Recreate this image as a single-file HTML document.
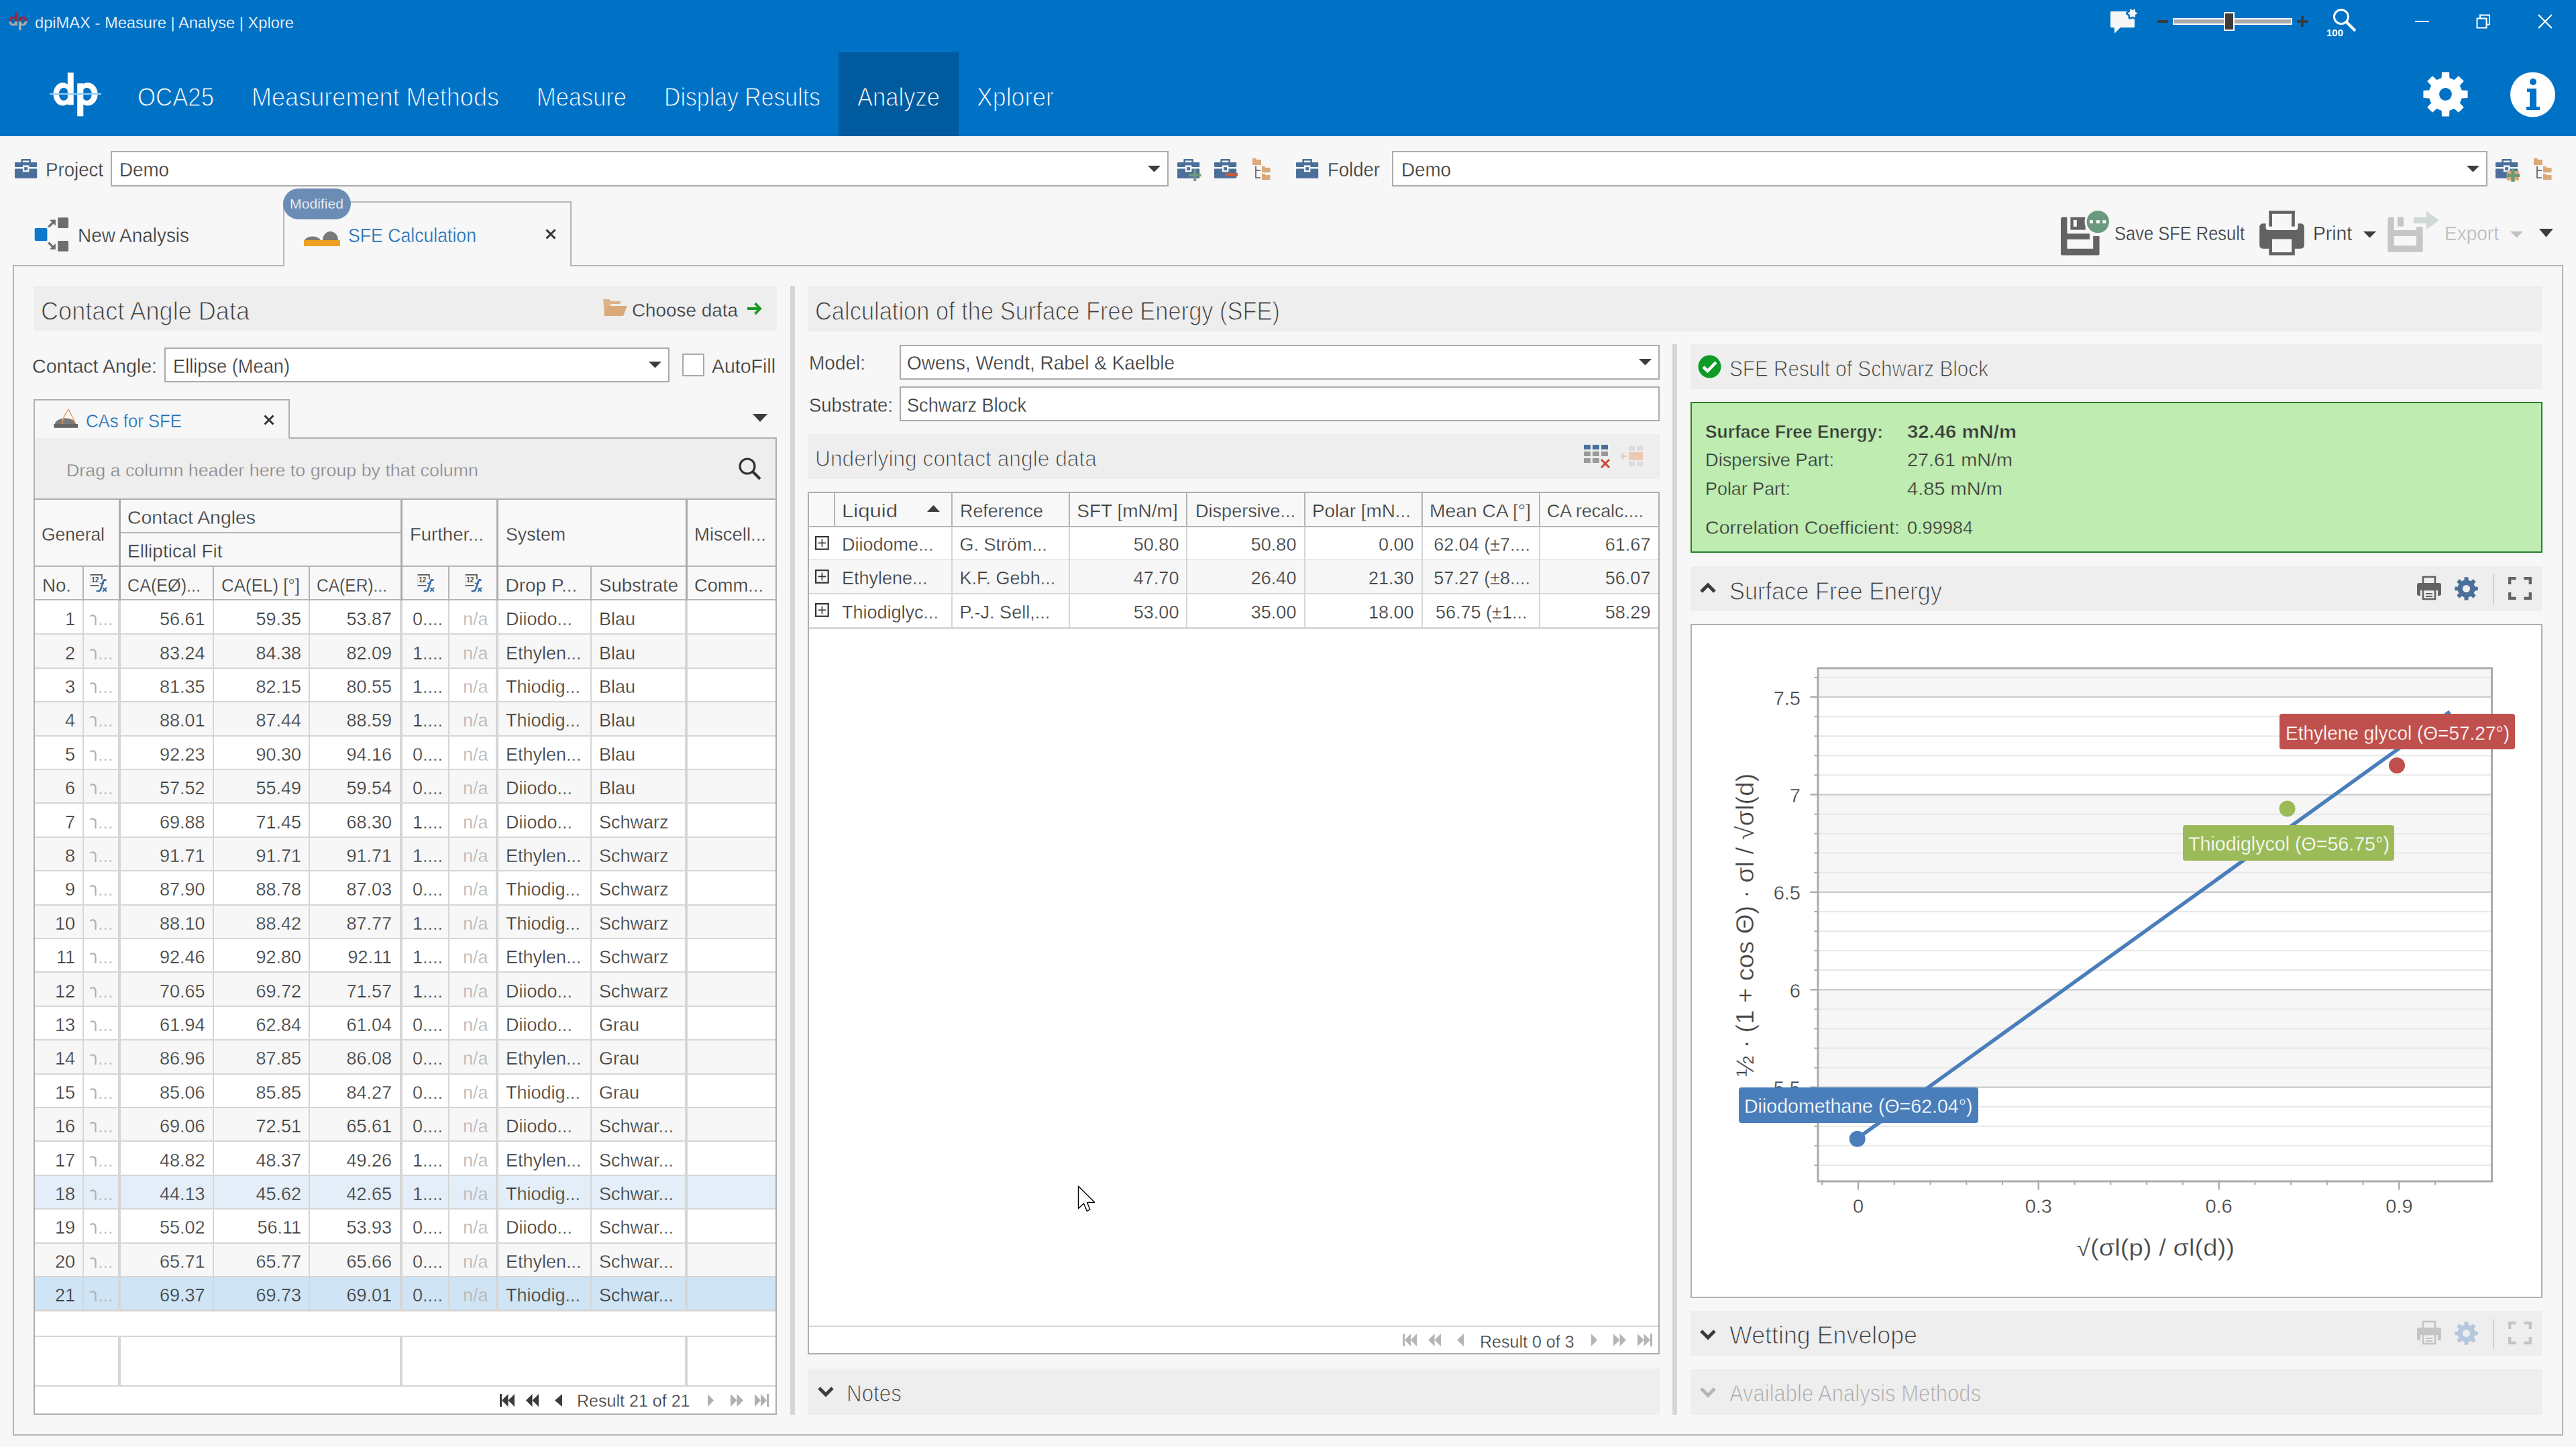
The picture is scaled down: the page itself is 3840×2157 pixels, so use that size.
<!DOCTYPE html><html><head><meta charset="utf-8"><style>
html,body{margin:0;padding:0;}
body{width:3840px;height:2157px;position:relative;overflow:hidden;background:#f7f7f7;font-family:"Liberation Sans", sans-serif;}
.a{position:absolute;display:block;}
.t{position:absolute;white-space:pre;font-family:"Liberation Sans", sans-serif;}
</style></head><body>
<div class="a" style="left:0px;top:0px;width:3840px;height:203px;background:#0072c6;"></div>
<div class="a" style="left:1250px;top:78px;width:179px;height:125px;background:#005a9e;"></div>
<svg class="a" style="left:0px;top:0px;" width="60" height="60" viewBox="0 0 60 60"><defs><clipPath id="lt"><rect x="0" y="0" width="60" height="31.5"/></clipPath><clipPath id="lb"><rect x="0" y="31.5" width="60" height="30"/></clipPath></defs>
      <g clip-path="url(#lt)"><g transform="translate(7.73,15.00) scale(0.41)" fill="#a0233a"><path d="M 13.5 40.35 a 14 17.15 0 1 0 28 0 a 14 17.15 0 1 0 -28 0 z M 21.8 40.35 a 7.2 9.65 0 1 1 14.4 0 a 7.2 9.65 0 1 1 -14.4 0 z" fill-rule="evenodd"/><path d="M 50 40.35 a 14.8 17.15 0 1 0 29.6 0 a 14.8 17.15 0 1 0 -29.6 0 z M 56 40.35 a 7.4 9.65 0 1 1 14.8 0 a 7.4 9.65 0 1 1 -14.8 0 z" fill-rule="evenodd"/><rect x="34.8" y="8.3" width="8.9" height="48.1"/><rect x="49.2" y="24.3" width="9.1" height="49"/></g></g>
      <g clip-path="url(#lb)"><g transform="translate(7.73,15.00) scale(0.41)" fill="#b0aaa8"><path d="M 13.5 40.35 a 14 17.15 0 1 0 28 0 a 14 17.15 0 1 0 -28 0 z M 21.8 40.35 a 7.2 9.65 0 1 1 14.4 0 a 7.2 9.65 0 1 1 -14.4 0 z" fill-rule="evenodd"/><path d="M 50 40.35 a 14.8 17.15 0 1 0 29.6 0 a 14.8 17.15 0 1 0 -29.6 0 z M 56 40.35 a 7.4 9.65 0 1 1 14.8 0 a 7.4 9.65 0 1 1 -14.8 0 z" fill-rule="evenodd"/><rect x="34.8" y="8.3" width="8.9" height="48.1"/><rect x="49.2" y="24.3" width="9.1" height="49"/></g></g>
      <rect x="10" y="30.8" width="28" height="1.2" fill="#333" opacity="0.6"/></svg>
<div class="t" style="top:22.48px;font-size:24px;line-height:24px;color:#ffffff;-webkit-text-stroke:0.3px #0072c6;left:52px;transform:scaleX(0.9864);transform-origin:left 50%;">dpiMAX - Measure | Analyse | Xplore</div>
<svg class="a" style="left:66px;top:100px;" width="94" height="80" viewBox="0 0 94 80"><g fill="#fff"><path d="M 13.5 40.35 a 14 17.15 0 1 0 28 0 a 14 17.15 0 1 0 -28 0 z M 21.8 40.35 a 7.2 9.65 0 1 1 14.4 0 a 7.2 9.65 0 1 1 -14.4 0 z" fill-rule="evenodd"/><path d="M 50 40.35 a 14.8 17.15 0 1 0 29.6 0 a 14.8 17.15 0 1 0 -29.6 0 z M 56 40.35 a 7.4 9.65 0 1 1 14.8 0 a 7.4 9.65 0 1 1 -14.8 0 z" fill-rule="evenodd"/><rect x="34.8" y="8.3" width="8.9" height="48.1"/><rect x="49.2" y="24.3" width="9.1" height="49"/></g>
      <rect x="8" y="39" width="77" height="2.2" fill="#8fd0ff"/></svg>
<div class="t" style="top:125.63px;font-size:38px;line-height:38px;color:#ffffff;-webkit-text-stroke:1.1px #0072c6;left:205px;transform:scaleX(0.9147);transform-origin:left 50%;">OCA25</div>
<div class="t" style="top:125.63px;font-size:38px;line-height:38px;color:#ffffff;-webkit-text-stroke:1.1px #0072c6;left:375px;transform:scaleX(0.9495);transform-origin:left 50%;">Measurement Methods</div>
<div class="t" style="top:125.63px;font-size:38px;line-height:38px;color:#ffffff;-webkit-text-stroke:1.1px #0072c6;left:800px;transform:scaleX(0.9064);transform-origin:left 50%;">Measure</div>
<div class="t" style="top:125.63px;font-size:38px;line-height:38px;color:#ffffff;-webkit-text-stroke:1.1px #0072c6;left:990px;transform:scaleX(0.8897);transform-origin:left 50%;">Display Results</div>
<div class="t" style="top:125.63px;font-size:38px;line-height:38px;color:#ffffff;-webkit-text-stroke:1.1px #005a9e;left:1278px;transform:scaleX(0.9097);transform-origin:left 50%;">Analyze</div>
<div class="t" style="top:125.63px;font-size:38px;line-height:38px;color:#ffffff;-webkit-text-stroke:1.1px #0072c6;left:1456px;transform:scaleX(0.9388);transform-origin:left 50%;">Xplorer</div>
<svg class="a" style="left:3136px;top:6px;" width="60" height="50" viewBox="0 0 60 50">
      <path d="M 11.5 10.9 h 33 a 1.5 1.5 0 0 1 1.5 1.5 v 21 a 1.5 1.5 0 0 1 -1.5 1.5 h -19.6 l -8.7 8.8 l -0.5 -8.8 h -4.2 a 1.5 1.5 0 0 1 -1.5 -1.5 v -21 a 1.5 1.5 0 0 1 1.5 -1.5 z" fill="#f7f7f7"/>
      <polygon points="50.40,13.80 46.88,16.10 46.65,20.30 42.90,18.40 39.15,20.30 38.92,16.10 35.40,13.80 38.92,11.50 39.15,7.30 42.90,9.20 46.65,7.30 46.88,11.50" fill="#0072c6" stroke="#0072c6" stroke-width="5" stroke-linejoin="round"/>
      <polygon points="50.40,13.80 46.88,16.10 46.65,20.30 42.90,18.40 39.15,20.30 38.92,16.10 35.40,13.80 38.92,11.50 39.15,7.30 42.90,9.20 46.65,7.30 46.88,11.50" fill="#f7f7f7"/>
    </svg>
<div class="a" style="left:3216px;top:30px;width:16px;height:4px;background:#3a3a3a;"></div>
<div class="a" style="left:3239px;top:27px;width:178px;height:10px;background:#ffffff;"></div>
<div class="a" style="left:3241px;top:29px;width:174px;height:6px;background:#a9a9a9;"></div>
<div class="a" style="left:3315px;top:18px;width:16px;height:28px;background:#ffffff;"></div>
<div class="a" style="left:3317px;top:20px;width:12px;height:24px;background:#3c3c3c;"></div>
<div class="a" style="left:3424px;top:30px;width:16px;height:4px;background:#3a3a3a;"></div>
<div class="a" style="left:3430px;top:24px;width:4px;height:16px;background:#3a3a3a;"></div>
<svg class="a" style="left:3470px;top:8px;" width="48" height="48" viewBox="0 0 48 48">
      <circle cx="20" cy="17" r="10.5" fill="none" stroke="#fff" stroke-width="3"/>
      <line x1="28" y1="25" x2="41" y2="38" stroke="#fff" stroke-width="4" stroke-linecap="butt"/>
    </svg>
<div class="t" style="top:41.10px;font-size:15px;line-height:15px;color:#fff;font-weight:700;left:3468px;">100</div>
<div class="a" style="left:3600px;top:31px;width:21px;height:2px;background:#fff;"></div>
<svg class="a" style="left:3690px;top:20px;" width="26" height="26" viewBox="0 0 26 26">
      <rect x="2.5" y="7.5" width="14" height="14" fill="none" stroke="#fff" stroke-width="2"/>
      <path d="M 7 7.5 v -5 h 14 v 14 h -4.5" fill="none" stroke="#fff" stroke-width="2"/>
    </svg>
<svg class="a" style="left:3782px;top:20px;" width="24" height="24" viewBox="0 0 24 24"><path d="M 2 2 L 22 22 M 22 2 L 2 22" stroke="#fff" stroke-width="2.2"/></svg>
<svg class="a" style="left:3612px;top:107px;" width="67" height="67" viewBox="0 0 67 67"><path d="M 27.52 9.44 L 28.00 0.45 L 39.00 0.45 L 39.48 9.44 L 46.29 12.26 L 52.98 6.24 L 60.76 14.02 L 54.74 20.71 L 57.56 27.52 L 66.55 28.00 L 66.55 39.00 L 57.56 39.48 L 54.74 46.29 L 60.76 52.98 L 52.98 60.76 L 46.29 54.74 L 39.48 57.56 L 39.00 66.55 L 28.00 66.55 L 27.52 57.56 L 20.71 54.74 L 14.02 60.76 L 6.24 52.98 L 12.26 46.29 L 9.44 39.48 L 0.45 39.00 L 0.45 28.00 L 9.44 27.52 L 12.26 20.71 L 6.24 14.02 L 14.02 6.24 L 20.71 12.26 Z" fill="#fff"/><circle cx="33.5" cy="33.5" r="24.77" fill="#fff"/><circle cx="33.5" cy="33.5" r="9.38" fill="#0072c6"/></svg>
<svg class="a" style="left:3742px;top:107px;" width="67" height="68" viewBox="0 0 67 68">
      <circle cx="33.5" cy="34" r="33.5" fill="#fff"/>
      <circle cx="34" cy="15" r="5" fill="#0072c6"/>
      <path d="M 25 25 h 14 v 27 h 5 v 5 h -20 v -5 h 5 v -22 h -4 z" fill="#0072c6"/>
    </svg>
<svg class="a" style="left:21.8px;top:236.8px;" width="37.2" height="32.8" viewBox="0 0 37.2 32.8"><g transform="scale(1.0000,1.0000)">
      <path d="M 9.4 0.8 a 0.8 0.8 0 0 1 0.8 -0.8 h 12.9 a 0.8 0.8 0 0 1 0.8 0.8 v 4.3 h -2.5 v -2.5 h -9.5 v 2.5 h -2.5 z" fill="#4b6f9a"/>
      <rect x="0" y="5.1" width="33.2" height="6.8" rx="0.8" fill="#4b6f9a"/>
      <rect x="0" y="14.6" width="33.2" height="14.2" rx="1.2" fill="#4b6f9a"/>
      <rect x="11.9" y="9.4" width="9.5" height="9.8" fill="#f7f7f7"/>
      <rect x="14.2" y="12.2" width="4.9" height="4.7" fill="#4b6f9a"/>
    </g></svg>
<div class="t" style="top:239.25px;font-size:29px;line-height:29px;color:#3a3a3a;-webkit-text-stroke:0.35px #f7f7f7;left:68px;transform:scaleX(0.9527);transform-origin:left 50%;">Project</div>
<div class="a" style="left:165px;top:225px;width:1577px;height:53px;background:#ffffff;border:2px solid #ababab;box-sizing:border-box;"></div>
<svg class="a" style="left:1711.0px;top:246.5px;" width="19" height="10" viewBox="0 0 19 10"><polygon points="0,0 19,0 9.5,9.5" fill="#3c3c3c"/></svg>
<div class="t" style="top:239.25px;font-size:29px;line-height:29px;color:#3a3a3a;-webkit-text-stroke:0.35px #ffffff;left:178px;transform:scaleX(0.9566);transform-origin:left 50%;">Demo</div>
<svg class="a" style="left:1754.6px;top:237px;" width="37.2" height="32.8" viewBox="0 0 37.2 32.8"><g transform="scale(1.0000,1.0000)">
      <path d="M 9.4 0.8 a 0.8 0.8 0 0 1 0.8 -0.8 h 12.9 a 0.8 0.8 0 0 1 0.8 0.8 v 4.3 h -2.5 v -2.5 h -9.5 v 2.5 h -2.5 z" fill="#4b6f9a"/>
      <rect x="0" y="5.1" width="33.2" height="6.8" rx="0.8" fill="#4b6f9a"/>
      <rect x="0" y="14.6" width="33.2" height="14.2" rx="1.2" fill="#4b6f9a"/>
      <rect x="11.9" y="9.4" width="9.5" height="9.8" fill="#f7f7f7"/>
      <rect x="14.2" y="12.2" width="4.9" height="4.7" fill="#4b6f9a"/>
    </g></svg>
<svg class="a" style="left:1771.5px;top:252px;" width="20" height="19" viewBox="0 0 20 19"><rect x="7.3" y="0" width="4" height="18" fill="#6f9a7c"/><rect x="0" y="7" width="18.5" height="4" fill="#6f9a7c"/></svg>
<svg class="a" style="left:1809.6px;top:237px;" width="37.2" height="32.8" viewBox="0 0 37.2 32.8"><g transform="scale(1.0000,1.0000)">
      <path d="M 9.4 0.8 a 0.8 0.8 0 0 1 0.8 -0.8 h 12.9 a 0.8 0.8 0 0 1 0.8 0.8 v 4.3 h -2.5 v -2.5 h -9.5 v 2.5 h -2.5 z" fill="#4b6f9a"/>
      <rect x="0" y="5.1" width="33.2" height="6.8" rx="0.8" fill="#4b6f9a"/>
      <rect x="0" y="14.6" width="33.2" height="14.2" rx="1.2" fill="#4b6f9a"/>
      <rect x="11.9" y="9.4" width="9.5" height="9.8" fill="#f7f7f7"/>
      <rect x="14.2" y="12.2" width="4.9" height="4.7" fill="#4b6f9a"/>
    </g></svg>
<svg class="a" style="left:1826px;top:257px;" width="22" height="8" viewBox="0 0 22 8"><rect x="0" y="1" width="19" height="4.7" fill="#c25a3f"/></svg>
<svg class="a" style="left:1866px;top:234px;" width="32" height="36" viewBox="0 0 32 36">
      <path d="M 1 2 h 5 l 1.5 2 h 6.5 v 8 h -13 z" fill="#dba878"/>
      <path d="M 15 14 h 4 l 1.5 2 h 7 v 7 h -12.5 z" fill="#dba878"/>
      <path d="M 15 25 h 4 l 1.5 2 h 7 v 7 h -12.5 z" fill="#dba878"/>
      <path d="M 6 13.5 v 17.5 h 7" fill="none" stroke="#555" stroke-width="1.6"/>
      <path d="M 6 20 h 7" fill="none" stroke="#555" stroke-width="1.6"/>
    </svg>
<svg class="a" style="left:1932.3px;top:237px;" width="37.2" height="32.8" viewBox="0 0 37.2 32.8"><g transform="scale(1.0000,1.0000)">
      <path d="M 9.4 0.8 a 0.8 0.8 0 0 1 0.8 -0.8 h 12.9 a 0.8 0.8 0 0 1 0.8 0.8 v 4.3 h -2.5 v -2.5 h -9.5 v 2.5 h -2.5 z" fill="#4b6f9a"/>
      <rect x="0" y="5.1" width="33.2" height="6.8" rx="0.8" fill="#4b6f9a"/>
      <rect x="0" y="14.6" width="33.2" height="14.2" rx="1.2" fill="#4b6f9a"/>
      <rect x="11.9" y="9.4" width="9.5" height="9.8" fill="#f7f7f7"/>
      <rect x="14.2" y="12.2" width="4.9" height="4.7" fill="#4b6f9a"/>
    </g></svg>
<div class="t" style="top:239.25px;font-size:29px;line-height:29px;color:#3a3a3a;-webkit-text-stroke:0.35px #f7f7f7;left:1979px;transform:scaleX(0.9489);transform-origin:left 50%;">Folder</div>
<div class="a" style="left:2075px;top:225px;width:1633px;height:53px;background:#ffffff;border:2px solid #ababab;box-sizing:border-box;"></div>
<svg class="a" style="left:3677.0px;top:246.5px;" width="19" height="10" viewBox="0 0 19 10"><polygon points="0,0 19,0 9.5,9.5" fill="#3c3c3c"/></svg>
<div class="t" style="top:239.25px;font-size:29px;line-height:29px;color:#3a3a3a;-webkit-text-stroke:0.35px #ffffff;left:2089px;transform:scaleX(0.9566);transform-origin:left 50%;">Demo</div>
<svg class="a" style="left:3720.3px;top:237px;" width="37.2" height="32.8" viewBox="0 0 37.2 32.8"><g transform="scale(1.0000,1.0000)">
      <path d="M 9.4 0.8 a 0.8 0.8 0 0 1 0.8 -0.8 h 12.9 a 0.8 0.8 0 0 1 0.8 0.8 v 4.3 h -2.5 v -2.5 h -9.5 v 2.5 h -2.5 z" fill="#4b6f9a"/>
      <rect x="0" y="5.1" width="33.2" height="6.8" rx="0.8" fill="#4b6f9a"/>
      <rect x="0" y="14.6" width="33.2" height="14.2" rx="1.2" fill="#4b6f9a"/>
      <rect x="11.9" y="9.4" width="9.5" height="9.8" fill="#f7f7f7"/>
      <rect x="14.2" y="12.2" width="4.9" height="4.7" fill="#4b6f9a"/>
    </g></svg>
<svg class="a" style="left:3736px;top:252px;" width="22" height="20" viewBox="0 0 22 20"><rect x="1" y="3" width="18" height="14" fill="#dba878"/><rect x="7.5" y="0" width="5" height="19" fill="#6d9a73"/><rect x="0" y="7" width="20" height="5" fill="#6d9a73"/></svg>
<svg class="a" style="left:3776px;top:234px;" width="32" height="36" viewBox="0 0 32 36">
      <path d="M 1 2 h 5 l 1.5 2 h 6.5 v 8 h -13 z" fill="#dba878"/>
      <path d="M 15 14 h 4 l 1.5 2 h 7 v 7 h -12.5 z" fill="#dba878"/>
      <path d="M 15 25 h 4 l 1.5 2 h 7 v 7 h -12.5 z" fill="#dba878"/>
      <path d="M 6 13.5 v 17.5 h 7" fill="none" stroke="#555" stroke-width="1.6"/>
      <path d="M 6 20 h 7" fill="none" stroke="#555" stroke-width="1.6"/>
    </svg>
<div class="a" style="left:19px;top:395px;width:3802px;height:1745px;border:2px solid #b5b5b5;box-sizing:border-box;"></div>
<div class="a" style="left:422px;top:300px;width:430px;height:97px;background:#f7f7f7;"></div>
<div class="a" style="left:422px;top:300px;width:2px;height:97px;background:#b5b5b5;"></div>
<div class="a" style="left:850px;top:300px;width:2px;height:97px;background:#b5b5b5;"></div>
<div class="a" style="left:422px;top:300px;width:430px;height:2px;background:#b5b5b5;"></div>
<div class="a" style="left:422px;top:281px;width:101px;height:46px;border-radius:23px;background:#6b8db5;"></div>
<div class="t" style="top:293.87px;font-size:20px;line-height:20px;color:#ffffff;-webkit-text-stroke:0.3px #6b8db5;left:472px;transform:translateX(-50%) scaleX(1.0581);transform-origin:center 50%;">Modified</div>
<svg class="a" style="left:44px;top:315px;" width="64" height="64" viewBox="0 0 64 64">
      <rect x="7.7" y="24.9" width="18.7" height="19.1" rx="1.5" fill="#0c78cf"/>
      <rect x="42.1" y="9.2" width="15.9" height="15.7" rx="1.5" fill="#6e6e6e"/>
      <rect x="42.1" y="44" width="15.9" height="15.7" rx="1.5" fill="#6e6e6e"/>
      <path d="M 28.3 23.4 L 36 15.7" stroke="#6e6e6e" stroke-width="3.4"/><polygon points="29.8,12.7 38.9,12.6 38.9,21.5" fill="#6e6e6e"/>
      <path d="M 28.3 46.6 L 36 54.3" stroke="#6e6e6e" stroke-width="3.4"/><polygon points="29.8,56.7 38.9,56.8 38.9,47.9" fill="#6e6e6e"/>
    </svg>
<div class="t" style="top:337.25px;font-size:29px;line-height:29px;color:#3a3a3a;-webkit-text-stroke:0.35px #f7f7f7;left:116px;transform:scaleX(0.9625);transform-origin:left 50%;">New Analysis</div>
<svg class="a" style="left:452px;top:340px;" width="58" height="30" viewBox="0 0 58 30">
      <path d="M 2 18 a 13 9 0 0 1 24 0 z" fill="#7a7a7a"/>
      <path d="M 29 18 a 11.5 13 0 0 1 23 0 z" fill="#7a7a7a"/>
      <rect x="1" y="18" width="54" height="9" fill="#f0a020"/>
    </svg>
<div class="t" style="top:337.25px;font-size:29px;line-height:29px;color:#1f6fb5;-webkit-text-stroke:0.35px #f7f7f7;left:519px;transform:scaleX(0.9185);transform-origin:left 50%;">SFE Calculation</div>
<svg class="a" style="left:813px;top:341px;" width="16" height="16" viewBox="0 0 16 16"><path d="M 1.5 1.5 L 14.5 14.5 M 14.5 1.5 L 1.5 14.5" stroke="#333" stroke-width="3"/></svg>
<svg class="a" style="left:3060px;top:305px;" width="90" height="80" viewBox="0 0 90 80">
      <g fill="#636363">
      <path d="M 12 21.3 a 2.5 2.5 0 0 1 2.5 -2.5 h 6.9 v 24.4 h 33.6 v 8.5 h -33.6 v 14.1 h 38.8 v -18.8 h 9.4 v 26 a 2.5 2.5 0 0 1 -2.5 2.5 h -52.6 a 2.5 2.5 0 0 1 -2.5 -2.5 z"/>
      <rect x="26.4" y="18.8" width="22.4" height="18.8"/>
      </g>
      <rect x="30.8" y="22.9" width="5" height="10" fill="#f7f7f7"/>
      <circle cx="67.3" cy="25.6" r="19.8" fill="#f7f7f7"/>
      <circle cx="67.3" cy="25.6" r="16.7" fill="#6a9a7e"/>
      <rect x="55" y="23.2" width="5" height="4.7" fill="#fff"/><rect x="65" y="23.2" width="5" height="4.7" fill="#fff"/><rect x="74.3" y="23.2" width="5" height="4.7" fill="#fff"/>
    </svg>
<div class="t" style="top:334.25px;font-size:29px;line-height:29px;color:#3a3a3a;-webkit-text-stroke:0.35px #f7f7f7;left:3152px;transform:scaleX(0.8785);transform-origin:left 50%;">Save SFE Result</div>
<svg class="a" style="left:3360px;top:305px;" width="80" height="80" viewBox="0 0 80 80">
      <g fill="#636363">
      <rect x="22.3" y="9.1" width="4.7" height="23.5"/><rect x="22.3" y="9.1" width="38.5" height="4.7"/><rect x="56.1" y="9.1" width="4.7" height="23.5"/>
      <path d="M 13.2 28.2 H 17.6 V 33.9 A 4 4 0 0 0 21.6 37.9 H 61.5 A 4 4 0 0 0 65.5 33.9 V 28.2 H 69.9 A 5 5 0 0 1 74.9 33.2 V 60.8 A 5 5 0 0 1 69.9 65.8 H 13.2 A 5 5 0 0 1 8.2 60.8 V 33.2 A 5 5 0 0 1 13.2 28.2 Z"/>
      <rect x="22.3" y="51.1" width="38.5" height="24.4"/>
      </g>
      <rect x="27" y="51.4" width="29.1" height="19.7" fill="#f7f7f7"/>
    </svg>
<div class="t" style="top:334.25px;font-size:29px;line-height:29px;color:#3a3a3a;-webkit-text-stroke:0.35px #f7f7f7;left:3448px;transform:scaleX(0.9725);transform-origin:left 50%;">Print</div>
<svg class="a" style="left:3523px;top:345px;" width="19" height="10" viewBox="0 0 19 10"><polygon points="0,0 19,0 9.5,9.5" fill="#3c3c3c"/></svg>
<svg class="a" style="left:3550px;top:305px;" width="90" height="80" viewBox="0 0 90 80">
      <g fill="#c6c6c6">
      <path d="M 9.4 21.3 a 2.5 2.5 0 0 1 2.5 -2.5 h 6.9 v 19.1 h 33.2 v -4.7 h 9.7 v 35.1 a 2.5 2.5 0 0 1 -2.5 2.5 h -47.3 a 2.5 2.5 0 0 1 -2.5 -2.5 z M 18.8 47 v 14.1 h 33.2 v -14.1 z" fill-rule="evenodd"/>
      <rect x="23.8" y="18.8" width="9.1" height="13.8"/>
      </g>
      <path d="M 47.9 19.1 h 19.1 v -9.7 l 18.8 13.8 l -18.8 14.1 v -9.4 h -19.1 z" fill="#cdd9d2"/>
    </svg>
<div class="t" style="top:334.25px;font-size:29px;line-height:29px;color:#b9b9b9;-webkit-text-stroke:0.35px #f7f7f7;left:3644px;transform:scaleX(0.9663);transform-origin:left 50%;">Export</div>
<svg class="a" style="left:3742px;top:345px;" width="19" height="10" viewBox="0 0 19 10"><polygon points="0,0 19,0 9.5,9.5" fill="#c2c2c2"/></svg>
<svg class="a" style="left:3785px;top:341px;" width="21" height="13" viewBox="0 0 21 13"><polygon points="0,0 21,0 10.5,12.5" fill="#3c3c3c"/></svg>
<div class="a" style="left:50px;top:426px;width:1108px;height:67px;background:#eeeeee;"></div>
<div class="t" style="top:445.23px;font-size:38px;line-height:38px;color:#3c3c3c;-webkit-text-stroke:1.1px #eeeeee;left:61px;transform:scaleX(0.9498);transform-origin:left 50%;">Contact Angle Data</div>
<svg class="a" style="left:897px;top:444px;" width="40" height="30" viewBox="0 0 40 30">
      <path d="M 2 2 h 9 l 3 3 h 14 v 4 h -14 l -10 17 z" fill="#dba878" opacity="0.85"/>
      <path d="M 9 12 h 29 l -6 15 h -29 z" fill="#dba878"/>
    </svg>
<div class="t" style="top:448.60px;font-size:28px;line-height:28px;color:#3a3a3a;-webkit-text-stroke:0.35px #eeeeee;left:942px;transform:scaleX(0.9950);transform-origin:left 50%;">Choose data</div>
<svg class="a" style="left:1112px;top:449px;" width="26" height="22" viewBox="0 0 26 22"><path d="M 2 11 h 19 M 13.5 3.2 l 7.6 7.8 l -7.6 7.8" fill="none" stroke="#179a25" stroke-width="3.8"/></svg>
<div class="a" style="left:1178px;top:426px;width:7px;height:1683px;background:#d6d6d6;"></div>
<div class="t" style="top:532.25px;font-size:29px;line-height:29px;color:#3a3a3a;-webkit-text-stroke:0.35px #f7f7f7;left:48px;transform:scaleX(0.9860);transform-origin:left 50%;">Contact Angle:</div>
<div class="a" style="left:245px;top:518px;width:753px;height:52px;background:#ffffff;border:2px solid #ababab;box-sizing:border-box;"></div>
<svg class="a" style="left:967.0px;top:539.0px;" width="19" height="10" viewBox="0 0 19 10"><polygon points="0,0 19,0 9.5,9.5" fill="#3c3c3c"/></svg>
<div class="t" style="top:532.25px;font-size:29px;line-height:29px;color:#3a3a3a;-webkit-text-stroke:0.35px #ffffff;left:258px;transform:scaleX(0.9388);transform-origin:left 50%;">Ellipse (Mean)</div>
<div class="a" style="left:1017px;top:527px;width:33px;height:34px;background:#fff;border:2px solid #a9a9a9;box-sizing:border-box;"></div>
<div class="t" style="top:532.25px;font-size:29px;line-height:29px;color:#3a3a3a;-webkit-text-stroke:0.35px #f7f7f7;left:1061px;transform:scaleX(0.9824);transform-origin:left 50%;">AutoFill</div>
<div class="a" style="left:50px;top:595px;width:382px;height:60px;background:#f7f7f7;border:2px solid #b0b0b0;box-sizing:border-box;border-bottom:none;"></div>
<div class="a" style="left:432px;top:653px;width:726px;height:2px;background:#b0b0b0;"></div>
<svg class="a" style="left:80px;top:607px;" width="38" height="33" viewBox="0 0 38 33">
      <path d="M 1.8 25.5 A 15.7 9.3 0 0 1 33.2 25.5 Z" fill="#7a7a7a"/>
      <rect x="0.3" y="25" width="35.7" height="5.8" fill="#666"/>
      <path d="M 12.8 25 Q 13 15 22.3 3.3 L 33 25" fill="none" stroke="#e5a060" stroke-width="1.4"/>
    </svg>
<div class="t" style="top:613.50px;font-size:28px;line-height:28px;color:#1f6fb5;-webkit-text-stroke:0.35px #f7f7f7;left:128px;transform:scaleX(0.9191);transform-origin:left 50%;">CAs for SFE</div>
<svg class="a" style="left:393px;top:618px;" width="16" height="16" viewBox="0 0 16 16"><path d="M 1.5 1.5 L 14.5 14.5 M 14.5 1.5 L 1.5 14.5" stroke="#333" stroke-width="3"/></svg>
<svg class="a" style="left:1122px;top:617px;" width="22" height="12" viewBox="0 0 22 12"><polygon points="0,0 22,0 11,12" fill="#3c3c3c"/></svg>
<div class="a" style="left:50px;top:653px;width:1108px;height:1456px;background:#ffffff;border:2px solid #adadad;box-sizing:border-box;"></div>
<div class="a" style="left:52px;top:653px;width:1104px;height:91px;background:#eeeeee;"></div>
<div class="a" style="left:431px;top:652px;width:727px;height:2px;background:#b0b0b0;"></div>
<div class="t" style="top:688.64px;font-size:25px;line-height:25px;color:#888;-webkit-text-stroke:0.35px #eeeeee;left:98.6px;transform:scaleX(1.0724);transform-origin:left 50%;">Drag a column header here to group by that column</div>
<svg class="a" style="left:1100px;top:681px;" width="36" height="36" viewBox="0 0 36 36"><circle cx="14" cy="14" r="11" fill="none" stroke="#333" stroke-width="3.2"/><line x1="22" y1="22" x2="33" y2="33" stroke="#333" stroke-width="4.2"/></svg>
<div class="a" style="left:52px;top:744px;width:1104px;height:151px;background:#f8f8f8;"></div>
<div class="a" style="left:50px;top:743px;width:1108px;height:2px;background:#adadad;"></div>
<div class="a" style="left:50px;top:843px;width:1108px;height:2px;background:#b4b4b4;"></div>
<div class="a" style="left:50px;top:893px;width:1108px;height:3px;background:#b4b4b4;"></div>
<div class="a" style="left:177px;top:793px;width:420px;height:2px;background:#b4b4b4;"></div>
<div class="a" style="left:177px;top:744px;width:3px;height:151px;background:#ababab;"></div>
<div class="a" style="left:597px;top:744px;width:3px;height:151px;background:#ababab;"></div>
<div class="a" style="left:740px;top:744px;width:3px;height:151px;background:#ababab;"></div>
<div class="a" style="left:1022px;top:744px;width:3px;height:151px;background:#ababab;"></div>
<div class="a" style="left:123px;top:843px;width:2px;height:52px;background:#b4b4b4;"></div>
<div class="a" style="left:317px;top:843px;width:2px;height:52px;background:#b4b4b4;"></div>
<div class="a" style="left:460px;top:843px;width:2px;height:52px;background:#b4b4b4;"></div>
<div class="a" style="left:668px;top:843px;width:2px;height:52px;background:#b4b4b4;"></div>
<div class="a" style="left:880px;top:843px;width:2px;height:52px;background:#b4b4b4;"></div>
<div class="t" style="top:782.70px;font-size:28px;line-height:28px;color:#3a3a3a;-webkit-text-stroke:0.35px #f8f8f8;left:62px;transform:scaleX(0.9435);transform-origin:left 50%;">General</div>
<div class="t" style="top:758.10px;font-size:28px;line-height:28px;color:#3a3a3a;-webkit-text-stroke:0.35px #f8f8f8;left:190px;transform:scaleX(1.0141);transform-origin:left 50%;">Contact Angles</div>
<div class="t" style="top:807.60px;font-size:28px;line-height:28px;color:#3a3a3a;-webkit-text-stroke:0.35px #f8f8f8;left:190px;">Elliptical Fit</div>
<div class="t" style="top:782.70px;font-size:28px;line-height:28px;color:#3a3a3a;-webkit-text-stroke:0.35px #f8f8f8;left:611px;transform:scaleX(0.9817);transform-origin:left 50%;">Further...</div>
<div class="t" style="top:782.70px;font-size:28px;line-height:28px;color:#3a3a3a;-webkit-text-stroke:0.35px #f8f8f8;left:753.5px;transform:scaleX(0.9533);transform-origin:left 50%;">System</div>
<div class="t" style="top:782.70px;font-size:28px;line-height:28px;color:#3a3a3a;-webkit-text-stroke:0.35px #f8f8f8;left:1035px;transform:scaleX(0.9825);transform-origin:left 50%;">Miscell...</div>
<div class="t" style="top:858.90px;font-size:28px;line-height:28px;color:#3a3a3a;-webkit-text-stroke:0.35px #f8f8f8;left:62.8px;transform:scaleX(0.9867);transform-origin:left 50%;">No.</div>
<svg class="a" style="left:125px;top:848px;" width="40" height="40" viewBox="0 0 40 40">
      <path d="M 9.6 9.4 v 15" fill="none" stroke="#dcdcdc" stroke-width="1.2"/>
      <path d="M 9.6 8.8 h 17.3 v 6.6" fill="none" stroke="#555" stroke-width="1.7"/>
      <path d="M 9.6 24.8 h 13" fill="none" stroke="#555" stroke-width="1.6"/>
      <text x="11.2" y="20.2" font-family="Liberation Sans" font-weight="700" font-size="10" fill="#4a4a4a">12</text>
      <path d="M 33.4 17.6 Q 30.6 14.6 28.9 18.8 L 25.2 30.2 Q 23.7 34.6 18.8 32.6" fill="none" stroke="#3d6ea5" stroke-width="2.7"/>
      <path d="M 23.8 21.6 h 6.2" fill="none" stroke="#3d6ea5" stroke-width="1.9"/>
      <path d="M 28.6 28.2 L 33.8 33.8 M 34.2 28 L 28.2 33.8" fill="none" stroke="#3d6ea5" stroke-width="2"/>
    </svg>
<div class="t" style="top:858.90px;font-size:28px;line-height:28px;color:#3a3a3a;-webkit-text-stroke:0.35px #f8f8f8;left:190px;transform:scaleX(0.8983);transform-origin:left 50%;">CA(EØ)...</div>
<div class="t" style="top:858.90px;font-size:28px;line-height:28px;color:#3a3a3a;-webkit-text-stroke:0.35px #f8f8f8;left:329.5px;transform:scaleX(0.9262);transform-origin:left 50%;">CA(EL) [°]</div>
<div class="t" style="top:858.90px;font-size:28px;line-height:28px;color:#3a3a3a;-webkit-text-stroke:0.35px #f8f8f8;left:472px;transform:scaleX(0.8766);transform-origin:left 50%;">CA(ER)...</div>
<svg class="a" style="left:613px;top:848px;" width="40" height="40" viewBox="0 0 40 40">
      <path d="M 9.6 9.4 v 15" fill="none" stroke="#dcdcdc" stroke-width="1.2"/>
      <path d="M 9.6 8.8 h 17.3 v 6.6" fill="none" stroke="#555" stroke-width="1.7"/>
      <path d="M 9.6 24.8 h 13" fill="none" stroke="#555" stroke-width="1.6"/>
      <text x="11.2" y="20.2" font-family="Liberation Sans" font-weight="700" font-size="10" fill="#4a4a4a">12</text>
      <path d="M 33.4 17.6 Q 30.6 14.6 28.9 18.8 L 25.2 30.2 Q 23.7 34.6 18.8 32.6" fill="none" stroke="#3d6ea5" stroke-width="2.7"/>
      <path d="M 23.8 21.6 h 6.2" fill="none" stroke="#3d6ea5" stroke-width="1.9"/>
      <path d="M 28.6 28.2 L 33.8 33.8 M 34.2 28 L 28.2 33.8" fill="none" stroke="#3d6ea5" stroke-width="2"/>
    </svg>
<svg class="a" style="left:684px;top:848px;" width="40" height="40" viewBox="0 0 40 40">
      <path d="M 9.6 9.4 v 15" fill="none" stroke="#dcdcdc" stroke-width="1.2"/>
      <path d="M 9.6 8.8 h 17.3 v 6.6" fill="none" stroke="#555" stroke-width="1.7"/>
      <path d="M 9.6 24.8 h 13" fill="none" stroke="#555" stroke-width="1.6"/>
      <text x="11.2" y="20.2" font-family="Liberation Sans" font-weight="700" font-size="10" fill="#4a4a4a">12</text>
      <path d="M 33.4 17.6 Q 30.6 14.6 28.9 18.8 L 25.2 30.2 Q 23.7 34.6 18.8 32.6" fill="none" stroke="#3d6ea5" stroke-width="2.7"/>
      <path d="M 23.8 21.6 h 6.2" fill="none" stroke="#3d6ea5" stroke-width="1.9"/>
      <path d="M 28.6 28.2 L 33.8 33.8 M 34.2 28 L 28.2 33.8" fill="none" stroke="#3d6ea5" stroke-width="2"/>
    </svg>
<div class="t" style="top:858.90px;font-size:28px;line-height:28px;color:#3a3a3a;-webkit-text-stroke:0.35px #f8f8f8;left:753.5px;">Drop P...</div>
<div class="t" style="top:858.90px;font-size:28px;line-height:28px;color:#3a3a3a;-webkit-text-stroke:0.35px #f8f8f8;left:892.6px;transform:scaleX(0.9845);transform-origin:left 50%;">Substrate</div>
<div class="t" style="top:858.90px;font-size:28px;line-height:28px;color:#3a3a3a;-webkit-text-stroke:0.35px #f8f8f8;left:1035px;transform:scaleX(0.9737);transform-origin:left 50%;">Comm...</div>
<div class="a" style="left:52px;top:895px;width:1104px;height:50px;background:#ffffff;"></div>
<div class="a" style="left:52px;top:945px;width:1104px;height:51px;background:#f7f7f7;"></div>
<div class="a" style="left:52px;top:996px;width:1104px;height:50px;background:#ffffff;"></div>
<div class="a" style="left:52px;top:1046px;width:1104px;height:51px;background:#f7f7f7;"></div>
<div class="a" style="left:52px;top:1097px;width:1104px;height:50px;background:#ffffff;"></div>
<div class="a" style="left:52px;top:1147px;width:1104px;height:50px;background:#f7f7f7;"></div>
<div class="a" style="left:52px;top:1197px;width:1104px;height:51px;background:#ffffff;"></div>
<div class="a" style="left:52px;top:1248px;width:1104px;height:50px;background:#f7f7f7;"></div>
<div class="a" style="left:52px;top:1298px;width:1104px;height:51px;background:#ffffff;"></div>
<div class="a" style="left:52px;top:1349px;width:1104px;height:50px;background:#f7f7f7;"></div>
<div class="a" style="left:52px;top:1399px;width:1104px;height:50px;background:#ffffff;"></div>
<div class="a" style="left:52px;top:1449px;width:1104px;height:51px;background:#f7f7f7;"></div>
<div class="a" style="left:52px;top:1500px;width:1104px;height:50px;background:#ffffff;"></div>
<div class="a" style="left:52px;top:1550px;width:1104px;height:51px;background:#f7f7f7;"></div>
<div class="a" style="left:52px;top:1601px;width:1104px;height:50px;background:#ffffff;"></div>
<div class="a" style="left:52px;top:1651px;width:1104px;height:50px;background:#f7f7f7;"></div>
<div class="a" style="left:52px;top:1701px;width:1104px;height:51px;background:#ffffff;"></div>
<div class="a" style="left:52px;top:1752px;width:1104px;height:50px;background:#e3eef8;"></div>
<div class="a" style="left:52px;top:1802px;width:1104px;height:51px;background:#ffffff;"></div>
<div class="a" style="left:52px;top:1853px;width:1104px;height:50px;background:#f7f7f7;"></div>
<div class="a" style="left:52px;top:1903px;width:1104px;height:50px;background:#cfe4f5;"></div>
<div class="a" style="left:52px;top:944px;width:1104px;height:2px;background:#d6d6d6;"></div>
<div class="a" style="left:52px;top:995px;width:1104px;height:2px;background:#d6d6d6;"></div>
<div class="a" style="left:52px;top:1045px;width:1104px;height:2px;background:#d6d6d6;"></div>
<div class="a" style="left:52px;top:1096px;width:1104px;height:2px;background:#d6d6d6;"></div>
<div class="a" style="left:52px;top:1146px;width:1104px;height:2px;background:#d6d6d6;"></div>
<div class="a" style="left:52px;top:1196px;width:1104px;height:2px;background:#d6d6d6;"></div>
<div class="a" style="left:52px;top:1247px;width:1104px;height:2px;background:#d6d6d6;"></div>
<div class="a" style="left:52px;top:1297px;width:1104px;height:2px;background:#d6d6d6;"></div>
<div class="a" style="left:52px;top:1348px;width:1104px;height:2px;background:#d6d6d6;"></div>
<div class="a" style="left:52px;top:1398px;width:1104px;height:2px;background:#d6d6d6;"></div>
<div class="a" style="left:52px;top:1448px;width:1104px;height:2px;background:#d6d6d6;"></div>
<div class="a" style="left:52px;top:1499px;width:1104px;height:2px;background:#d6d6d6;"></div>
<div class="a" style="left:52px;top:1549px;width:1104px;height:2px;background:#d6d6d6;"></div>
<div class="a" style="left:52px;top:1600px;width:1104px;height:2px;background:#d6d6d6;"></div>
<div class="a" style="left:52px;top:1650px;width:1104px;height:2px;background:#d6d6d6;"></div>
<div class="a" style="left:52px;top:1700px;width:1104px;height:2px;background:#d6d6d6;"></div>
<div class="a" style="left:52px;top:1751px;width:1104px;height:2px;background:#d6d6d6;"></div>
<div class="a" style="left:52px;top:1801px;width:1104px;height:2px;background:#d6d6d6;"></div>
<div class="a" style="left:52px;top:1852px;width:1104px;height:2px;background:#d6d6d6;"></div>
<div class="a" style="left:52px;top:1902px;width:1104px;height:2px;background:#d6d6d6;"></div>
<div class="a" style="left:52px;top:1952px;width:1104px;height:3px;background:#d6d6d6;"></div>
<div class="a" style="left:123px;top:895px;width:2px;height:1058px;background:#d6d6d6;"></div>
<div class="a" style="left:317px;top:895px;width:2px;height:1058px;background:#d6d6d6;"></div>
<div class="a" style="left:460px;top:895px;width:2px;height:1058px;background:#d6d6d6;"></div>
<div class="a" style="left:668px;top:895px;width:2px;height:1058px;background:#d6d6d6;"></div>
<div class="a" style="left:880px;top:895px;width:2px;height:1058px;background:#d6d6d6;"></div>
<div class="a" style="left:176px;top:895px;width:4px;height:1058px;background:#d6d6d6;"></div>
<div class="a" style="left:596px;top:895px;width:4px;height:1058px;background:#d6d6d6;"></div>
<div class="a" style="left:739px;top:895px;width:4px;height:1058px;background:#d6d6d6;"></div>
<div class="a" style="left:1021px;top:895px;width:4px;height:1058px;background:#d6d6d6;"></div>
<div class="t" style="top:910.14px;font-size:27px;line-height:27px;color:#3a3a3a;-webkit-text-stroke:0.35px #ffffff;right:3728px;">1</div>
<svg class="a" style="left:133px;top:916.2px;" width="12" height="17" viewBox="0 0 12 17"><path d="M 1.5 3 a 4.5 4.5 0 0 1 8 3 v 10" fill="none" stroke="#b0b0b0" stroke-width="2.2"/></svg>
<div class="t" style="top:910.14px;font-size:27px;line-height:27px;color:#b0b0b0;-webkit-text-stroke:0.35px #ffffff;left:146px;">...</div>
<div class="t" style="top:910.14px;font-size:27px;line-height:27px;color:#3a3a3a;-webkit-text-stroke:0.35px #ffffff;right:3534.5px;">56.61</div>
<div class="t" style="top:910.14px;font-size:27px;line-height:27px;color:#3a3a3a;-webkit-text-stroke:0.35px #ffffff;right:3391px;">59.35</div>
<div class="t" style="top:910.14px;font-size:27px;line-height:27px;color:#3a3a3a;-webkit-text-stroke:0.35px #ffffff;right:3256px;">53.87</div>
<div class="t" style="top:910.14px;font-size:27px;line-height:27px;color:#3a3a3a;-webkit-text-stroke:0.35px #ffffff;left:615px;">0....</div>
<div class="t" style="top:910.14px;font-size:27px;line-height:27px;color:#b5b5b5;-webkit-text-stroke:0.35px #ffffff;right:3112.5px;">n/a</div>
<div class="t" style="top:910.14px;font-size:27px;line-height:27px;color:#3a3a3a;-webkit-text-stroke:0.35px #ffffff;left:754px;">Diiodo...</div>
<div class="t" style="top:910.14px;font-size:27px;line-height:27px;color:#3a3a3a;-webkit-text-stroke:0.35px #ffffff;left:893px;">Blau</div>
<div class="t" style="top:960.54px;font-size:27px;line-height:27px;color:#3a3a3a;-webkit-text-stroke:0.35px #f7f7f7;right:3728px;">2</div>
<svg class="a" style="left:133px;top:966.6px;" width="12" height="17" viewBox="0 0 12 17"><path d="M 1.5 3 a 4.5 4.5 0 0 1 8 3 v 10" fill="none" stroke="#b0b0b0" stroke-width="2.2"/></svg>
<div class="t" style="top:960.54px;font-size:27px;line-height:27px;color:#b0b0b0;-webkit-text-stroke:0.35px #f7f7f7;left:146px;">...</div>
<div class="t" style="top:960.54px;font-size:27px;line-height:27px;color:#3a3a3a;-webkit-text-stroke:0.35px #f7f7f7;right:3534.5px;">83.24</div>
<div class="t" style="top:960.54px;font-size:27px;line-height:27px;color:#3a3a3a;-webkit-text-stroke:0.35px #f7f7f7;right:3391px;">84.38</div>
<div class="t" style="top:960.54px;font-size:27px;line-height:27px;color:#3a3a3a;-webkit-text-stroke:0.35px #f7f7f7;right:3256px;">82.09</div>
<div class="t" style="top:960.54px;font-size:27px;line-height:27px;color:#3a3a3a;-webkit-text-stroke:0.35px #f7f7f7;left:615px;">1....</div>
<div class="t" style="top:960.54px;font-size:27px;line-height:27px;color:#b5b5b5;-webkit-text-stroke:0.35px #f7f7f7;right:3112.5px;">n/a</div>
<div class="t" style="top:960.54px;font-size:27px;line-height:27px;color:#3a3a3a;-webkit-text-stroke:0.35px #f7f7f7;left:754px;">Ethylen...</div>
<div class="t" style="top:960.54px;font-size:27px;line-height:27px;color:#3a3a3a;-webkit-text-stroke:0.35px #f7f7f7;left:893px;">Blau</div>
<div class="t" style="top:1010.94px;font-size:27px;line-height:27px;color:#3a3a3a;-webkit-text-stroke:0.35px #ffffff;right:3728px;">3</div>
<svg class="a" style="left:133px;top:1017.0px;" width="12" height="17" viewBox="0 0 12 17"><path d="M 1.5 3 a 4.5 4.5 0 0 1 8 3 v 10" fill="none" stroke="#b0b0b0" stroke-width="2.2"/></svg>
<div class="t" style="top:1010.94px;font-size:27px;line-height:27px;color:#b0b0b0;-webkit-text-stroke:0.35px #ffffff;left:146px;">...</div>
<div class="t" style="top:1010.94px;font-size:27px;line-height:27px;color:#3a3a3a;-webkit-text-stroke:0.35px #ffffff;right:3534.5px;">81.35</div>
<div class="t" style="top:1010.94px;font-size:27px;line-height:27px;color:#3a3a3a;-webkit-text-stroke:0.35px #ffffff;right:3391px;">82.15</div>
<div class="t" style="top:1010.94px;font-size:27px;line-height:27px;color:#3a3a3a;-webkit-text-stroke:0.35px #ffffff;right:3256px;">80.55</div>
<div class="t" style="top:1010.94px;font-size:27px;line-height:27px;color:#3a3a3a;-webkit-text-stroke:0.35px #ffffff;left:615px;">1....</div>
<div class="t" style="top:1010.94px;font-size:27px;line-height:27px;color:#b5b5b5;-webkit-text-stroke:0.35px #ffffff;right:3112.5px;">n/a</div>
<div class="t" style="top:1010.94px;font-size:27px;line-height:27px;color:#3a3a3a;-webkit-text-stroke:0.35px #ffffff;left:754px;">Thiodig...</div>
<div class="t" style="top:1010.94px;font-size:27px;line-height:27px;color:#3a3a3a;-webkit-text-stroke:0.35px #ffffff;left:893px;">Blau</div>
<div class="t" style="top:1061.34px;font-size:27px;line-height:27px;color:#3a3a3a;-webkit-text-stroke:0.35px #f7f7f7;right:3728px;">4</div>
<svg class="a" style="left:133px;top:1067.4px;" width="12" height="17" viewBox="0 0 12 17"><path d="M 1.5 3 a 4.5 4.5 0 0 1 8 3 v 10" fill="none" stroke="#b0b0b0" stroke-width="2.2"/></svg>
<div class="t" style="top:1061.34px;font-size:27px;line-height:27px;color:#b0b0b0;-webkit-text-stroke:0.35px #f7f7f7;left:146px;">...</div>
<div class="t" style="top:1061.34px;font-size:27px;line-height:27px;color:#3a3a3a;-webkit-text-stroke:0.35px #f7f7f7;right:3534.5px;">88.01</div>
<div class="t" style="top:1061.34px;font-size:27px;line-height:27px;color:#3a3a3a;-webkit-text-stroke:0.35px #f7f7f7;right:3391px;">87.44</div>
<div class="t" style="top:1061.34px;font-size:27px;line-height:27px;color:#3a3a3a;-webkit-text-stroke:0.35px #f7f7f7;right:3256px;">88.59</div>
<div class="t" style="top:1061.34px;font-size:27px;line-height:27px;color:#3a3a3a;-webkit-text-stroke:0.35px #f7f7f7;left:615px;">1....</div>
<div class="t" style="top:1061.34px;font-size:27px;line-height:27px;color:#b5b5b5;-webkit-text-stroke:0.35px #f7f7f7;right:3112.5px;">n/a</div>
<div class="t" style="top:1061.34px;font-size:27px;line-height:27px;color:#3a3a3a;-webkit-text-stroke:0.35px #f7f7f7;left:754px;">Thiodig...</div>
<div class="t" style="top:1061.34px;font-size:27px;line-height:27px;color:#3a3a3a;-webkit-text-stroke:0.35px #f7f7f7;left:893px;">Blau</div>
<div class="t" style="top:1111.74px;font-size:27px;line-height:27px;color:#3a3a3a;-webkit-text-stroke:0.35px #ffffff;right:3728px;">5</div>
<svg class="a" style="left:133px;top:1117.8px;" width="12" height="17" viewBox="0 0 12 17"><path d="M 1.5 3 a 4.5 4.5 0 0 1 8 3 v 10" fill="none" stroke="#b0b0b0" stroke-width="2.2"/></svg>
<div class="t" style="top:1111.74px;font-size:27px;line-height:27px;color:#b0b0b0;-webkit-text-stroke:0.35px #ffffff;left:146px;">...</div>
<div class="t" style="top:1111.74px;font-size:27px;line-height:27px;color:#3a3a3a;-webkit-text-stroke:0.35px #ffffff;right:3534.5px;">92.23</div>
<div class="t" style="top:1111.74px;font-size:27px;line-height:27px;color:#3a3a3a;-webkit-text-stroke:0.35px #ffffff;right:3391px;">90.30</div>
<div class="t" style="top:1111.74px;font-size:27px;line-height:27px;color:#3a3a3a;-webkit-text-stroke:0.35px #ffffff;right:3256px;">94.16</div>
<div class="t" style="top:1111.74px;font-size:27px;line-height:27px;color:#3a3a3a;-webkit-text-stroke:0.35px #ffffff;left:615px;">0....</div>
<div class="t" style="top:1111.74px;font-size:27px;line-height:27px;color:#b5b5b5;-webkit-text-stroke:0.35px #ffffff;right:3112.5px;">n/a</div>
<div class="t" style="top:1111.74px;font-size:27px;line-height:27px;color:#3a3a3a;-webkit-text-stroke:0.35px #ffffff;left:754px;">Ethylen...</div>
<div class="t" style="top:1111.74px;font-size:27px;line-height:27px;color:#3a3a3a;-webkit-text-stroke:0.35px #ffffff;left:893px;">Blau</div>
<div class="t" style="top:1162.14px;font-size:27px;line-height:27px;color:#3a3a3a;-webkit-text-stroke:0.35px #f7f7f7;right:3728px;">6</div>
<svg class="a" style="left:133px;top:1168.2px;" width="12" height="17" viewBox="0 0 12 17"><path d="M 1.5 3 a 4.5 4.5 0 0 1 8 3 v 10" fill="none" stroke="#b0b0b0" stroke-width="2.2"/></svg>
<div class="t" style="top:1162.14px;font-size:27px;line-height:27px;color:#b0b0b0;-webkit-text-stroke:0.35px #f7f7f7;left:146px;">...</div>
<div class="t" style="top:1162.14px;font-size:27px;line-height:27px;color:#3a3a3a;-webkit-text-stroke:0.35px #f7f7f7;right:3534.5px;">57.52</div>
<div class="t" style="top:1162.14px;font-size:27px;line-height:27px;color:#3a3a3a;-webkit-text-stroke:0.35px #f7f7f7;right:3391px;">55.49</div>
<div class="t" style="top:1162.14px;font-size:27px;line-height:27px;color:#3a3a3a;-webkit-text-stroke:0.35px #f7f7f7;right:3256px;">59.54</div>
<div class="t" style="top:1162.14px;font-size:27px;line-height:27px;color:#3a3a3a;-webkit-text-stroke:0.35px #f7f7f7;left:615px;">0....</div>
<div class="t" style="top:1162.14px;font-size:27px;line-height:27px;color:#b5b5b5;-webkit-text-stroke:0.35px #f7f7f7;right:3112.5px;">n/a</div>
<div class="t" style="top:1162.14px;font-size:27px;line-height:27px;color:#3a3a3a;-webkit-text-stroke:0.35px #f7f7f7;left:754px;">Diiodo...</div>
<div class="t" style="top:1162.14px;font-size:27px;line-height:27px;color:#3a3a3a;-webkit-text-stroke:0.35px #f7f7f7;left:893px;">Blau</div>
<div class="t" style="top:1212.54px;font-size:27px;line-height:27px;color:#3a3a3a;-webkit-text-stroke:0.35px #ffffff;right:3728px;">7</div>
<svg class="a" style="left:133px;top:1218.6000000000001px;" width="12" height="17" viewBox="0 0 12 17"><path d="M 1.5 3 a 4.5 4.5 0 0 1 8 3 v 10" fill="none" stroke="#b0b0b0" stroke-width="2.2"/></svg>
<div class="t" style="top:1212.54px;font-size:27px;line-height:27px;color:#b0b0b0;-webkit-text-stroke:0.35px #ffffff;left:146px;">...</div>
<div class="t" style="top:1212.54px;font-size:27px;line-height:27px;color:#3a3a3a;-webkit-text-stroke:0.35px #ffffff;right:3534.5px;">69.88</div>
<div class="t" style="top:1212.54px;font-size:27px;line-height:27px;color:#3a3a3a;-webkit-text-stroke:0.35px #ffffff;right:3391px;">71.45</div>
<div class="t" style="top:1212.54px;font-size:27px;line-height:27px;color:#3a3a3a;-webkit-text-stroke:0.35px #ffffff;right:3256px;">68.30</div>
<div class="t" style="top:1212.54px;font-size:27px;line-height:27px;color:#3a3a3a;-webkit-text-stroke:0.35px #ffffff;left:615px;">1....</div>
<div class="t" style="top:1212.54px;font-size:27px;line-height:27px;color:#b5b5b5;-webkit-text-stroke:0.35px #ffffff;right:3112.5px;">n/a</div>
<div class="t" style="top:1212.54px;font-size:27px;line-height:27px;color:#3a3a3a;-webkit-text-stroke:0.35px #ffffff;left:754px;">Diiodo...</div>
<div class="t" style="top:1212.54px;font-size:27px;line-height:27px;color:#3a3a3a;-webkit-text-stroke:0.35px #ffffff;left:893px;">Schwarz</div>
<div class="t" style="top:1262.94px;font-size:27px;line-height:27px;color:#3a3a3a;-webkit-text-stroke:0.35px #f7f7f7;right:3728px;">8</div>
<svg class="a" style="left:133px;top:1269.0px;" width="12" height="17" viewBox="0 0 12 17"><path d="M 1.5 3 a 4.5 4.5 0 0 1 8 3 v 10" fill="none" stroke="#b0b0b0" stroke-width="2.2"/></svg>
<div class="t" style="top:1262.94px;font-size:27px;line-height:27px;color:#b0b0b0;-webkit-text-stroke:0.35px #f7f7f7;left:146px;">...</div>
<div class="t" style="top:1262.94px;font-size:27px;line-height:27px;color:#3a3a3a;-webkit-text-stroke:0.35px #f7f7f7;right:3534.5px;">91.71</div>
<div class="t" style="top:1262.94px;font-size:27px;line-height:27px;color:#3a3a3a;-webkit-text-stroke:0.35px #f7f7f7;right:3391px;">91.71</div>
<div class="t" style="top:1262.94px;font-size:27px;line-height:27px;color:#3a3a3a;-webkit-text-stroke:0.35px #f7f7f7;right:3256px;">91.71</div>
<div class="t" style="top:1262.94px;font-size:27px;line-height:27px;color:#3a3a3a;-webkit-text-stroke:0.35px #f7f7f7;left:615px;">1....</div>
<div class="t" style="top:1262.94px;font-size:27px;line-height:27px;color:#b5b5b5;-webkit-text-stroke:0.35px #f7f7f7;right:3112.5px;">n/a</div>
<div class="t" style="top:1262.94px;font-size:27px;line-height:27px;color:#3a3a3a;-webkit-text-stroke:0.35px #f7f7f7;left:754px;">Ethylen...</div>
<div class="t" style="top:1262.94px;font-size:27px;line-height:27px;color:#3a3a3a;-webkit-text-stroke:0.35px #f7f7f7;left:893px;">Schwarz</div>
<div class="t" style="top:1313.34px;font-size:27px;line-height:27px;color:#3a3a3a;-webkit-text-stroke:0.35px #ffffff;right:3728px;">9</div>
<svg class="a" style="left:133px;top:1319.4px;" width="12" height="17" viewBox="0 0 12 17"><path d="M 1.5 3 a 4.5 4.5 0 0 1 8 3 v 10" fill="none" stroke="#b0b0b0" stroke-width="2.2"/></svg>
<div class="t" style="top:1313.34px;font-size:27px;line-height:27px;color:#b0b0b0;-webkit-text-stroke:0.35px #ffffff;left:146px;">...</div>
<div class="t" style="top:1313.34px;font-size:27px;line-height:27px;color:#3a3a3a;-webkit-text-stroke:0.35px #ffffff;right:3534.5px;">87.90</div>
<div class="t" style="top:1313.34px;font-size:27px;line-height:27px;color:#3a3a3a;-webkit-text-stroke:0.35px #ffffff;right:3391px;">88.78</div>
<div class="t" style="top:1313.34px;font-size:27px;line-height:27px;color:#3a3a3a;-webkit-text-stroke:0.35px #ffffff;right:3256px;">87.03</div>
<div class="t" style="top:1313.34px;font-size:27px;line-height:27px;color:#3a3a3a;-webkit-text-stroke:0.35px #ffffff;left:615px;">0....</div>
<div class="t" style="top:1313.34px;font-size:27px;line-height:27px;color:#b5b5b5;-webkit-text-stroke:0.35px #ffffff;right:3112.5px;">n/a</div>
<div class="t" style="top:1313.34px;font-size:27px;line-height:27px;color:#3a3a3a;-webkit-text-stroke:0.35px #ffffff;left:754px;">Thiodig...</div>
<div class="t" style="top:1313.34px;font-size:27px;line-height:27px;color:#3a3a3a;-webkit-text-stroke:0.35px #ffffff;left:893px;">Schwarz</div>
<div class="t" style="top:1363.74px;font-size:27px;line-height:27px;color:#3a3a3a;-webkit-text-stroke:0.35px #f7f7f7;right:3728px;">10</div>
<svg class="a" style="left:133px;top:1369.8px;" width="12" height="17" viewBox="0 0 12 17"><path d="M 1.5 3 a 4.5 4.5 0 0 1 8 3 v 10" fill="none" stroke="#b0b0b0" stroke-width="2.2"/></svg>
<div class="t" style="top:1363.74px;font-size:27px;line-height:27px;color:#b0b0b0;-webkit-text-stroke:0.35px #f7f7f7;left:146px;">...</div>
<div class="t" style="top:1363.74px;font-size:27px;line-height:27px;color:#3a3a3a;-webkit-text-stroke:0.35px #f7f7f7;right:3534.5px;">88.10</div>
<div class="t" style="top:1363.74px;font-size:27px;line-height:27px;color:#3a3a3a;-webkit-text-stroke:0.35px #f7f7f7;right:3391px;">88.42</div>
<div class="t" style="top:1363.74px;font-size:27px;line-height:27px;color:#3a3a3a;-webkit-text-stroke:0.35px #f7f7f7;right:3256px;">87.77</div>
<div class="t" style="top:1363.74px;font-size:27px;line-height:27px;color:#3a3a3a;-webkit-text-stroke:0.35px #f7f7f7;left:615px;">1....</div>
<div class="t" style="top:1363.74px;font-size:27px;line-height:27px;color:#b5b5b5;-webkit-text-stroke:0.35px #f7f7f7;right:3112.5px;">n/a</div>
<div class="t" style="top:1363.74px;font-size:27px;line-height:27px;color:#3a3a3a;-webkit-text-stroke:0.35px #f7f7f7;left:754px;">Thiodig...</div>
<div class="t" style="top:1363.74px;font-size:27px;line-height:27px;color:#3a3a3a;-webkit-text-stroke:0.35px #f7f7f7;left:893px;">Schwarz</div>
<div class="t" style="top:1414.14px;font-size:27px;line-height:27px;color:#3a3a3a;-webkit-text-stroke:0.35px #ffffff;right:3728px;">11</div>
<svg class="a" style="left:133px;top:1420.2px;" width="12" height="17" viewBox="0 0 12 17"><path d="M 1.5 3 a 4.5 4.5 0 0 1 8 3 v 10" fill="none" stroke="#b0b0b0" stroke-width="2.2"/></svg>
<div class="t" style="top:1414.14px;font-size:27px;line-height:27px;color:#b0b0b0;-webkit-text-stroke:0.35px #ffffff;left:146px;">...</div>
<div class="t" style="top:1414.14px;font-size:27px;line-height:27px;color:#3a3a3a;-webkit-text-stroke:0.35px #ffffff;right:3534.5px;">92.46</div>
<div class="t" style="top:1414.14px;font-size:27px;line-height:27px;color:#3a3a3a;-webkit-text-stroke:0.35px #ffffff;right:3391px;">92.80</div>
<div class="t" style="top:1414.14px;font-size:27px;line-height:27px;color:#3a3a3a;-webkit-text-stroke:0.35px #ffffff;right:3256px;">92.11</div>
<div class="t" style="top:1414.14px;font-size:27px;line-height:27px;color:#3a3a3a;-webkit-text-stroke:0.35px #ffffff;left:615px;">1....</div>
<div class="t" style="top:1414.14px;font-size:27px;line-height:27px;color:#b5b5b5;-webkit-text-stroke:0.35px #ffffff;right:3112.5px;">n/a</div>
<div class="t" style="top:1414.14px;font-size:27px;line-height:27px;color:#3a3a3a;-webkit-text-stroke:0.35px #ffffff;left:754px;">Ethylen...</div>
<div class="t" style="top:1414.14px;font-size:27px;line-height:27px;color:#3a3a3a;-webkit-text-stroke:0.35px #ffffff;left:893px;">Schwarz</div>
<div class="t" style="top:1464.54px;font-size:27px;line-height:27px;color:#3a3a3a;-webkit-text-stroke:0.35px #f7f7f7;right:3728px;">12</div>
<svg class="a" style="left:133px;top:1470.6000000000001px;" width="12" height="17" viewBox="0 0 12 17"><path d="M 1.5 3 a 4.5 4.5 0 0 1 8 3 v 10" fill="none" stroke="#b0b0b0" stroke-width="2.2"/></svg>
<div class="t" style="top:1464.54px;font-size:27px;line-height:27px;color:#b0b0b0;-webkit-text-stroke:0.35px #f7f7f7;left:146px;">...</div>
<div class="t" style="top:1464.54px;font-size:27px;line-height:27px;color:#3a3a3a;-webkit-text-stroke:0.35px #f7f7f7;right:3534.5px;">70.65</div>
<div class="t" style="top:1464.54px;font-size:27px;line-height:27px;color:#3a3a3a;-webkit-text-stroke:0.35px #f7f7f7;right:3391px;">69.72</div>
<div class="t" style="top:1464.54px;font-size:27px;line-height:27px;color:#3a3a3a;-webkit-text-stroke:0.35px #f7f7f7;right:3256px;">71.57</div>
<div class="t" style="top:1464.54px;font-size:27px;line-height:27px;color:#3a3a3a;-webkit-text-stroke:0.35px #f7f7f7;left:615px;">1....</div>
<div class="t" style="top:1464.54px;font-size:27px;line-height:27px;color:#b5b5b5;-webkit-text-stroke:0.35px #f7f7f7;right:3112.5px;">n/a</div>
<div class="t" style="top:1464.54px;font-size:27px;line-height:27px;color:#3a3a3a;-webkit-text-stroke:0.35px #f7f7f7;left:754px;">Diiodo...</div>
<div class="t" style="top:1464.54px;font-size:27px;line-height:27px;color:#3a3a3a;-webkit-text-stroke:0.35px #f7f7f7;left:893px;">Schwarz</div>
<div class="t" style="top:1514.94px;font-size:27px;line-height:27px;color:#3a3a3a;-webkit-text-stroke:0.35px #ffffff;right:3728px;">13</div>
<svg class="a" style="left:133px;top:1521.0px;" width="12" height="17" viewBox="0 0 12 17"><path d="M 1.5 3 a 4.5 4.5 0 0 1 8 3 v 10" fill="none" stroke="#b0b0b0" stroke-width="2.2"/></svg>
<div class="t" style="top:1514.94px;font-size:27px;line-height:27px;color:#b0b0b0;-webkit-text-stroke:0.35px #ffffff;left:146px;">...</div>
<div class="t" style="top:1514.94px;font-size:27px;line-height:27px;color:#3a3a3a;-webkit-text-stroke:0.35px #ffffff;right:3534.5px;">61.94</div>
<div class="t" style="top:1514.94px;font-size:27px;line-height:27px;color:#3a3a3a;-webkit-text-stroke:0.35px #ffffff;right:3391px;">62.84</div>
<div class="t" style="top:1514.94px;font-size:27px;line-height:27px;color:#3a3a3a;-webkit-text-stroke:0.35px #ffffff;right:3256px;">61.04</div>
<div class="t" style="top:1514.94px;font-size:27px;line-height:27px;color:#3a3a3a;-webkit-text-stroke:0.35px #ffffff;left:615px;">0....</div>
<div class="t" style="top:1514.94px;font-size:27px;line-height:27px;color:#b5b5b5;-webkit-text-stroke:0.35px #ffffff;right:3112.5px;">n/a</div>
<div class="t" style="top:1514.94px;font-size:27px;line-height:27px;color:#3a3a3a;-webkit-text-stroke:0.35px #ffffff;left:754px;">Diiodo...</div>
<div class="t" style="top:1514.94px;font-size:27px;line-height:27px;color:#3a3a3a;-webkit-text-stroke:0.35px #ffffff;left:893px;">Grau</div>
<div class="t" style="top:1565.34px;font-size:27px;line-height:27px;color:#3a3a3a;-webkit-text-stroke:0.35px #f7f7f7;right:3728px;">14</div>
<svg class="a" style="left:133px;top:1571.3999999999999px;" width="12" height="17" viewBox="0 0 12 17"><path d="M 1.5 3 a 4.5 4.5 0 0 1 8 3 v 10" fill="none" stroke="#b0b0b0" stroke-width="2.2"/></svg>
<div class="t" style="top:1565.34px;font-size:27px;line-height:27px;color:#b0b0b0;-webkit-text-stroke:0.35px #f7f7f7;left:146px;">...</div>
<div class="t" style="top:1565.34px;font-size:27px;line-height:27px;color:#3a3a3a;-webkit-text-stroke:0.35px #f7f7f7;right:3534.5px;">86.96</div>
<div class="t" style="top:1565.34px;font-size:27px;line-height:27px;color:#3a3a3a;-webkit-text-stroke:0.35px #f7f7f7;right:3391px;">87.85</div>
<div class="t" style="top:1565.34px;font-size:27px;line-height:27px;color:#3a3a3a;-webkit-text-stroke:0.35px #f7f7f7;right:3256px;">86.08</div>
<div class="t" style="top:1565.34px;font-size:27px;line-height:27px;color:#3a3a3a;-webkit-text-stroke:0.35px #f7f7f7;left:615px;">0....</div>
<div class="t" style="top:1565.34px;font-size:27px;line-height:27px;color:#b5b5b5;-webkit-text-stroke:0.35px #f7f7f7;right:3112.5px;">n/a</div>
<div class="t" style="top:1565.34px;font-size:27px;line-height:27px;color:#3a3a3a;-webkit-text-stroke:0.35px #f7f7f7;left:754px;">Ethylen...</div>
<div class="t" style="top:1565.34px;font-size:27px;line-height:27px;color:#3a3a3a;-webkit-text-stroke:0.35px #f7f7f7;left:893px;">Grau</div>
<div class="t" style="top:1615.74px;font-size:27px;line-height:27px;color:#3a3a3a;-webkit-text-stroke:0.35px #ffffff;right:3728px;">15</div>
<svg class="a" style="left:133px;top:1621.8px;" width="12" height="17" viewBox="0 0 12 17"><path d="M 1.5 3 a 4.5 4.5 0 0 1 8 3 v 10" fill="none" stroke="#b0b0b0" stroke-width="2.2"/></svg>
<div class="t" style="top:1615.74px;font-size:27px;line-height:27px;color:#b0b0b0;-webkit-text-stroke:0.35px #ffffff;left:146px;">...</div>
<div class="t" style="top:1615.74px;font-size:27px;line-height:27px;color:#3a3a3a;-webkit-text-stroke:0.35px #ffffff;right:3534.5px;">85.06</div>
<div class="t" style="top:1615.74px;font-size:27px;line-height:27px;color:#3a3a3a;-webkit-text-stroke:0.35px #ffffff;right:3391px;">85.85</div>
<div class="t" style="top:1615.74px;font-size:27px;line-height:27px;color:#3a3a3a;-webkit-text-stroke:0.35px #ffffff;right:3256px;">84.27</div>
<div class="t" style="top:1615.74px;font-size:27px;line-height:27px;color:#3a3a3a;-webkit-text-stroke:0.35px #ffffff;left:615px;">0....</div>
<div class="t" style="top:1615.74px;font-size:27px;line-height:27px;color:#b5b5b5;-webkit-text-stroke:0.35px #ffffff;right:3112.5px;">n/a</div>
<div class="t" style="top:1615.74px;font-size:27px;line-height:27px;color:#3a3a3a;-webkit-text-stroke:0.35px #ffffff;left:754px;">Thiodig...</div>
<div class="t" style="top:1615.74px;font-size:27px;line-height:27px;color:#3a3a3a;-webkit-text-stroke:0.35px #ffffff;left:893px;">Grau</div>
<div class="t" style="top:1666.14px;font-size:27px;line-height:27px;color:#3a3a3a;-webkit-text-stroke:0.35px #f7f7f7;right:3728px;">16</div>
<svg class="a" style="left:133px;top:1672.2px;" width="12" height="17" viewBox="0 0 12 17"><path d="M 1.5 3 a 4.5 4.5 0 0 1 8 3 v 10" fill="none" stroke="#b0b0b0" stroke-width="2.2"/></svg>
<div class="t" style="top:1666.14px;font-size:27px;line-height:27px;color:#b0b0b0;-webkit-text-stroke:0.35px #f7f7f7;left:146px;">...</div>
<div class="t" style="top:1666.14px;font-size:27px;line-height:27px;color:#3a3a3a;-webkit-text-stroke:0.35px #f7f7f7;right:3534.5px;">69.06</div>
<div class="t" style="top:1666.14px;font-size:27px;line-height:27px;color:#3a3a3a;-webkit-text-stroke:0.35px #f7f7f7;right:3391px;">72.51</div>
<div class="t" style="top:1666.14px;font-size:27px;line-height:27px;color:#3a3a3a;-webkit-text-stroke:0.35px #f7f7f7;right:3256px;">65.61</div>
<div class="t" style="top:1666.14px;font-size:27px;line-height:27px;color:#3a3a3a;-webkit-text-stroke:0.35px #f7f7f7;left:615px;">0....</div>
<div class="t" style="top:1666.14px;font-size:27px;line-height:27px;color:#b5b5b5;-webkit-text-stroke:0.35px #f7f7f7;right:3112.5px;">n/a</div>
<div class="t" style="top:1666.14px;font-size:27px;line-height:27px;color:#3a3a3a;-webkit-text-stroke:0.35px #f7f7f7;left:754px;">Diiodo...</div>
<div class="t" style="top:1666.14px;font-size:27px;line-height:27px;color:#3a3a3a;-webkit-text-stroke:0.35px #f7f7f7;left:893px;">Schwar...</div>
<div class="t" style="top:1716.54px;font-size:27px;line-height:27px;color:#3a3a3a;-webkit-text-stroke:0.35px #ffffff;right:3728px;">17</div>
<svg class="a" style="left:133px;top:1722.6000000000001px;" width="12" height="17" viewBox="0 0 12 17"><path d="M 1.5 3 a 4.5 4.5 0 0 1 8 3 v 10" fill="none" stroke="#b0b0b0" stroke-width="2.2"/></svg>
<div class="t" style="top:1716.54px;font-size:27px;line-height:27px;color:#b0b0b0;-webkit-text-stroke:0.35px #ffffff;left:146px;">...</div>
<div class="t" style="top:1716.54px;font-size:27px;line-height:27px;color:#3a3a3a;-webkit-text-stroke:0.35px #ffffff;right:3534.5px;">48.82</div>
<div class="t" style="top:1716.54px;font-size:27px;line-height:27px;color:#3a3a3a;-webkit-text-stroke:0.35px #ffffff;right:3391px;">48.37</div>
<div class="t" style="top:1716.54px;font-size:27px;line-height:27px;color:#3a3a3a;-webkit-text-stroke:0.35px #ffffff;right:3256px;">49.26</div>
<div class="t" style="top:1716.54px;font-size:27px;line-height:27px;color:#3a3a3a;-webkit-text-stroke:0.35px #ffffff;left:615px;">1....</div>
<div class="t" style="top:1716.54px;font-size:27px;line-height:27px;color:#b5b5b5;-webkit-text-stroke:0.35px #ffffff;right:3112.5px;">n/a</div>
<div class="t" style="top:1716.54px;font-size:27px;line-height:27px;color:#3a3a3a;-webkit-text-stroke:0.35px #ffffff;left:754px;">Ethylen...</div>
<div class="t" style="top:1716.54px;font-size:27px;line-height:27px;color:#3a3a3a;-webkit-text-stroke:0.35px #ffffff;left:893px;">Schwar...</div>
<div class="t" style="top:1766.94px;font-size:27px;line-height:27px;color:#3a3a3a;-webkit-text-stroke:0.35px #e3eef8;right:3728px;">18</div>
<svg class="a" style="left:133px;top:1773.0px;" width="12" height="17" viewBox="0 0 12 17"><path d="M 1.5 3 a 4.5 4.5 0 0 1 8 3 v 10" fill="none" stroke="#b0b0b0" stroke-width="2.2"/></svg>
<div class="t" style="top:1766.94px;font-size:27px;line-height:27px;color:#b0b0b0;-webkit-text-stroke:0.35px #e3eef8;left:146px;">...</div>
<div class="t" style="top:1766.94px;font-size:27px;line-height:27px;color:#3a3a3a;-webkit-text-stroke:0.35px #e3eef8;right:3534.5px;">44.13</div>
<div class="t" style="top:1766.94px;font-size:27px;line-height:27px;color:#3a3a3a;-webkit-text-stroke:0.35px #e3eef8;right:3391px;">45.62</div>
<div class="t" style="top:1766.94px;font-size:27px;line-height:27px;color:#3a3a3a;-webkit-text-stroke:0.35px #e3eef8;right:3256px;">42.65</div>
<div class="t" style="top:1766.94px;font-size:27px;line-height:27px;color:#3a3a3a;-webkit-text-stroke:0.35px #e3eef8;left:615px;">1....</div>
<div class="t" style="top:1766.94px;font-size:27px;line-height:27px;color:#b5b5b5;-webkit-text-stroke:0.35px #e3eef8;right:3112.5px;">n/a</div>
<div class="t" style="top:1766.94px;font-size:27px;line-height:27px;color:#3a3a3a;-webkit-text-stroke:0.35px #e3eef8;left:754px;">Thiodig...</div>
<div class="t" style="top:1766.94px;font-size:27px;line-height:27px;color:#3a3a3a;-webkit-text-stroke:0.35px #e3eef8;left:893px;">Schwar...</div>
<div class="t" style="top:1817.34px;font-size:27px;line-height:27px;color:#3a3a3a;-webkit-text-stroke:0.35px #ffffff;right:3728px;">19</div>
<svg class="a" style="left:133px;top:1823.3999999999999px;" width="12" height="17" viewBox="0 0 12 17"><path d="M 1.5 3 a 4.5 4.5 0 0 1 8 3 v 10" fill="none" stroke="#b0b0b0" stroke-width="2.2"/></svg>
<div class="t" style="top:1817.34px;font-size:27px;line-height:27px;color:#b0b0b0;-webkit-text-stroke:0.35px #ffffff;left:146px;">...</div>
<div class="t" style="top:1817.34px;font-size:27px;line-height:27px;color:#3a3a3a;-webkit-text-stroke:0.35px #ffffff;right:3534.5px;">55.02</div>
<div class="t" style="top:1817.34px;font-size:27px;line-height:27px;color:#3a3a3a;-webkit-text-stroke:0.35px #ffffff;right:3391px;">56.11</div>
<div class="t" style="top:1817.34px;font-size:27px;line-height:27px;color:#3a3a3a;-webkit-text-stroke:0.35px #ffffff;right:3256px;">53.93</div>
<div class="t" style="top:1817.34px;font-size:27px;line-height:27px;color:#3a3a3a;-webkit-text-stroke:0.35px #ffffff;left:615px;">0....</div>
<div class="t" style="top:1817.34px;font-size:27px;line-height:27px;color:#b5b5b5;-webkit-text-stroke:0.35px #ffffff;right:3112.5px;">n/a</div>
<div class="t" style="top:1817.34px;font-size:27px;line-height:27px;color:#3a3a3a;-webkit-text-stroke:0.35px #ffffff;left:754px;">Diiodo...</div>
<div class="t" style="top:1817.34px;font-size:27px;line-height:27px;color:#3a3a3a;-webkit-text-stroke:0.35px #ffffff;left:893px;">Schwar...</div>
<div class="t" style="top:1867.74px;font-size:27px;line-height:27px;color:#3a3a3a;-webkit-text-stroke:0.35px #f7f7f7;right:3728px;">20</div>
<svg class="a" style="left:133px;top:1873.8px;" width="12" height="17" viewBox="0 0 12 17"><path d="M 1.5 3 a 4.5 4.5 0 0 1 8 3 v 10" fill="none" stroke="#b0b0b0" stroke-width="2.2"/></svg>
<div class="t" style="top:1867.74px;font-size:27px;line-height:27px;color:#b0b0b0;-webkit-text-stroke:0.35px #f7f7f7;left:146px;">...</div>
<div class="t" style="top:1867.74px;font-size:27px;line-height:27px;color:#3a3a3a;-webkit-text-stroke:0.35px #f7f7f7;right:3534.5px;">65.71</div>
<div class="t" style="top:1867.74px;font-size:27px;line-height:27px;color:#3a3a3a;-webkit-text-stroke:0.35px #f7f7f7;right:3391px;">65.77</div>
<div class="t" style="top:1867.74px;font-size:27px;line-height:27px;color:#3a3a3a;-webkit-text-stroke:0.35px #f7f7f7;right:3256px;">65.66</div>
<div class="t" style="top:1867.74px;font-size:27px;line-height:27px;color:#3a3a3a;-webkit-text-stroke:0.35px #f7f7f7;left:615px;">0....</div>
<div class="t" style="top:1867.74px;font-size:27px;line-height:27px;color:#b5b5b5;-webkit-text-stroke:0.35px #f7f7f7;right:3112.5px;">n/a</div>
<div class="t" style="top:1867.74px;font-size:27px;line-height:27px;color:#3a3a3a;-webkit-text-stroke:0.35px #f7f7f7;left:754px;">Ethylen...</div>
<div class="t" style="top:1867.74px;font-size:27px;line-height:27px;color:#3a3a3a;-webkit-text-stroke:0.35px #f7f7f7;left:893px;">Schwar...</div>
<div class="t" style="top:1918.14px;font-size:27px;line-height:27px;color:#3a3a3a;-webkit-text-stroke:0.35px #cfe4f5;right:3728px;">21</div>
<svg class="a" style="left:133px;top:1924.2px;" width="12" height="17" viewBox="0 0 12 17"><path d="M 1.5 3 a 4.5 4.5 0 0 1 8 3 v 10" fill="none" stroke="#b0b0b0" stroke-width="2.2"/></svg>
<div class="t" style="top:1918.14px;font-size:27px;line-height:27px;color:#b0b0b0;-webkit-text-stroke:0.35px #cfe4f5;left:146px;">...</div>
<div class="t" style="top:1918.14px;font-size:27px;line-height:27px;color:#3a3a3a;-webkit-text-stroke:0.35px #cfe4f5;right:3534.5px;">69.37</div>
<div class="t" style="top:1918.14px;font-size:27px;line-height:27px;color:#3a3a3a;-webkit-text-stroke:0.35px #cfe4f5;right:3391px;">69.73</div>
<div class="t" style="top:1918.14px;font-size:27px;line-height:27px;color:#3a3a3a;-webkit-text-stroke:0.35px #cfe4f5;right:3256px;">69.01</div>
<div class="t" style="top:1918.14px;font-size:27px;line-height:27px;color:#3a3a3a;-webkit-text-stroke:0.35px #cfe4f5;left:615px;">0....</div>
<div class="t" style="top:1918.14px;font-size:27px;line-height:27px;color:#b5b5b5;-webkit-text-stroke:0.35px #cfe4f5;right:3112.5px;">n/a</div>
<div class="t" style="top:1918.14px;font-size:27px;line-height:27px;color:#3a3a3a;-webkit-text-stroke:0.35px #cfe4f5;left:754px;">Thiodig...</div>
<div class="t" style="top:1918.14px;font-size:27px;line-height:27px;color:#3a3a3a;-webkit-text-stroke:0.35px #cfe4f5;left:893px;">Schwar...</div>
<div class="a" style="left:52px;top:1991px;width:1104px;height:2px;background:#d6d6d6;"></div>
<div class="a" style="left:52px;top:2065px;width:1104px;height:2px;background:#d6d6d6;"></div>
<div class="a" style="left:176px;top:1992px;width:4px;height:73px;background:#d6d6d6;"></div>
<div class="a" style="left:596px;top:1992px;width:4px;height:73px;background:#d6d6d6;"></div>
<div class="a" style="left:1021px;top:1992px;width:4px;height:73px;background:#d6d6d6;"></div>
<svg class="a" style="left:745px;top:2078px;" width="22" height="19" viewBox="0 0 22 19"><rect x="0" y="0" width="3" height="19" fill="#3c3c3c"/><polygon points="3,9.5 12.5,0 12.5,19" fill="#3c3c3c"/><polygon points="12.5,9.5 22,0 22,19" fill="#3c3c3c"/></svg>
<svg class="a" style="left:784px;top:2078px;" width="19" height="19" viewBox="0 0 19 19"><polygon points="0,9.5 9.5,0 9.5,19" fill="#3c3c3c"/><polygon points="9.5,9.5 19,0 19,19" fill="#3c3c3c"/></svg>
<svg class="a" style="left:827px;top:2078px;" width="11" height="19" viewBox="0 0 11 19"><polygon points="0,9.5 11,0 11,19" fill="#3c3c3c"/></svg>
<svg class="a" style="left:1055px;top:2078px;" width="9" height="19" viewBox="0 0 9 19"><polygon points="0,0 9,9.5 0,19" fill="#b0b0b0"/></svg>
<svg class="a" style="left:1089px;top:2078px;" width="19" height="19" viewBox="0 0 19 19"><polygon points="0,0 9.5,9.5 0,19" fill="#b0b0b0"/><polygon points="9.5,0 19,9.5 9.5,19" fill="#b0b0b0"/></svg>
<svg class="a" style="left:1125px;top:2078px;" width="21" height="19" viewBox="0 0 21 19"><polygon points="0,0 9.0,9.5 0,19" fill="#b0b0b0"/><polygon points="9.0,0 18,9.5 9.0,19" fill="#b0b0b0"/><rect x="18" y="0" width="3" height="19" fill="#b0b0b0"/></svg>
<div class="t" style="top:2074.79px;font-size:26px;line-height:26px;color:#3a3a3a;-webkit-text-stroke:0.35px #ffffff;left:860.4px;transform:scaleX(0.9635);transform-origin:left 50%;">Result 21 of 21</div>
<div class="a" style="left:1204px;top:426px;width:2586px;height:68px;background:#eeeeee;"></div>
<div class="t" style="top:444.63px;font-size:38px;line-height:38px;color:#3c3c3c;-webkit-text-stroke:1.1px #eeeeee;left:1215px;transform:scaleX(0.9064);transform-origin:left 50%;">Calculation of the Surface Free Energy (SFE)</div>
<div class="t" style="top:527.25px;font-size:29px;line-height:29px;color:#3a3a3a;-webkit-text-stroke:0.35px #f7f7f7;left:1205.5px;transform:scaleX(0.9650);transform-origin:left 50%;">Model:</div>
<div class="a" style="left:1341px;top:514px;width:1133px;height:52px;background:#ffffff;border:2px solid #ababab;box-sizing:border-box;"></div>
<svg class="a" style="left:2443.0px;top:535.0px;" width="19" height="10" viewBox="0 0 19 10"><polygon points="0,0 19,0 9.5,9.5" fill="#3c3c3c"/></svg>
<div class="t" style="top:527.25px;font-size:29px;line-height:29px;color:#3a3a3a;-webkit-text-stroke:0.35px #ffffff;left:1352px;transform:scaleX(0.9644);transform-origin:left 50%;">Owens, Wendt, Rabel &amp; Kaelble</div>
<div class="t" style="top:589.95px;font-size:29px;line-height:29px;color:#3a3a3a;-webkit-text-stroke:0.35px #f7f7f7;left:1205.5px;transform:scaleX(0.9456);transform-origin:left 50%;">Substrate:</div>
<div class="a" style="left:1341px;top:576px;width:1133px;height:52px;background:#ffffff;border:2px solid #ababab;box-sizing:border-box;"></div>
<div class="t" style="top:589.95px;font-size:29px;line-height:29px;color:#3a3a3a;-webkit-text-stroke:0.35px #ffffff;left:1352px;transform:scaleX(0.9360);transform-origin:left 50%;">Schwarz Block</div>
<div class="a" style="left:1204px;top:647px;width:1270px;height:67px;background:#eeeeee;"></div>
<div class="t" style="top:667.27px;font-size:33px;line-height:33px;color:#3c3c3c;-webkit-text-stroke:1.1px #eeeeee;left:1215px;transform:scaleX(0.9619);transform-origin:left 50%;">Underlying contact angle data</div>
<svg class="a" style="left:2360px;top:662px;" width="42" height="38" viewBox="0 0 42 38">
      <g fill="#4b6f9a"><rect x="1" y="1" width="10" height="7"/><rect x="14" y="1" width="10" height="7"/><rect x="27" y="1" width="10" height="7"/></g>
      <g fill="#9a9a9a"><rect x="1" y="11" width="10" height="7"/><rect x="14" y="11" width="10" height="7"/><rect x="27" y="11" width="10" height="7"/>
      <rect x="1" y="21" width="10" height="7"/><rect x="14" y="21" width="10" height="7"/></g>
      <path d="M 27 23 L 39 35 M 39 23 L 27 35" stroke="#c9472f" stroke-width="3"/>
    </svg>
<svg class="a" style="left:2416px;top:664px;" width="40" height="34" viewBox="0 0 40 34">
      <g fill="#dcdcdc"><rect x="12" y="1" width="9" height="7"/><rect x="24" y="1" width="9" height="7"/>
      <rect x="12" y="24" width="9" height="7"/><rect x="24" y="24" width="9" height="7"/></g>
      <rect x="12" y="10" width="21" height="12" fill="#ecc9b5"/>
      <path d="M 1 16 h 8 M 5 12 l -4 4 l 4 4" fill="none" stroke="#ecc9b5" stroke-width="2.2"/>
    </svg>
<div class="a" style="left:1204px;top:733px;width:1270px;height:1286px;background:#ffffff;border:2px solid #adadad;box-sizing:border-box;"></div>
<div class="a" style="left:1206px;top:735px;width:1266px;height:50px;background:#f8f8f8;"></div>
<div class="a" style="left:1204px;top:784px;width:1270px;height:2px;background:#b4b4b4;"></div>
<div class="a" style="left:1243px;top:735px;width:2px;height:50px;background:#b4b4b4;"></div>
<div class="a" style="left:1418px;top:735px;width:2px;height:50px;background:#b4b4b4;"></div>
<div class="a" style="left:1593px;top:735px;width:2px;height:50px;background:#b4b4b4;"></div>
<div class="a" style="left:1768px;top:735px;width:2px;height:50px;background:#b4b4b4;"></div>
<div class="a" style="left:1944px;top:735px;width:2px;height:50px;background:#b4b4b4;"></div>
<div class="a" style="left:2119px;top:735px;width:2px;height:50px;background:#b4b4b4;"></div>
<div class="a" style="left:2294px;top:735px;width:2px;height:50px;background:#b4b4b4;"></div>
<div class="t" style="top:747.50px;font-size:28px;line-height:28px;color:#3a3a3a;-webkit-text-stroke:0.35px #f8f8f8;left:1255px;transform:scaleX(1.1106);transform-origin:left 50%;">Liquid</div>
<svg class="a" style="left:1382px;top:753px;" width="19" height="10" viewBox="0 0 19 10"><polygon points="0,10 19,10 9.5,0" fill="#3c3c3c"/></svg>
<div class="t" style="top:747.50px;font-size:28px;line-height:28px;color:#3a3a3a;-webkit-text-stroke:0.35px #f8f8f8;left:1430.6px;transform:scaleX(0.9598);transform-origin:left 50%;">Reference</div>
<div class="t" style="top:747.50px;font-size:28px;line-height:28px;color:#3a3a3a;-webkit-text-stroke:0.35px #f8f8f8;left:1605.3px;">SFT [mN/m]</div>
<div class="t" style="top:747.50px;font-size:28px;line-height:28px;color:#3a3a3a;-webkit-text-stroke:0.35px #f8f8f8;left:1781.5px;transform:scaleX(0.9672);transform-origin:left 50%;">Dispersive...</div>
<div class="t" style="top:747.50px;font-size:28px;line-height:28px;color:#3a3a3a;-webkit-text-stroke:0.35px #f8f8f8;left:1956.2px;transform:scaleX(0.9945);transform-origin:left 50%;">Polar [mN...</div>
<div class="t" style="top:747.50px;font-size:28px;line-height:28px;color:#3a3a3a;-webkit-text-stroke:0.35px #f8f8f8;left:2131.4px;transform:scaleX(1.0086);transform-origin:left 50%;">Mean CA [°]</div>
<div class="t" style="top:747.50px;font-size:28px;line-height:28px;color:#3a3a3a;-webkit-text-stroke:0.35px #f8f8f8;left:2305.8px;transform:scaleX(0.9540);transform-origin:left 50%;">CA recalc....</div>
<div class="a" style="left:1206px;top:834px;width:1266px;height:2px;background:#d6d6d6;"></div>
<div class="a" style="left:1206px;top:835px;width:1266px;height:50px;background:#f7f7f7;"></div>
<div class="a" style="left:1206px;top:884px;width:1266px;height:2px;background:#d6d6d6;"></div>
<div class="a" style="left:1206px;top:935px;width:1266px;height:3px;background:#d6d6d6;"></div>
<div class="a" style="left:1418px;top:785px;width:2px;height:150px;background:#d6d6d6;"></div>
<div class="a" style="left:1593px;top:785px;width:2px;height:150px;background:#d6d6d6;"></div>
<div class="a" style="left:1768px;top:785px;width:2px;height:150px;background:#d6d6d6;"></div>
<div class="a" style="left:1944px;top:785px;width:2px;height:150px;background:#d6d6d6;"></div>
<div class="a" style="left:2119px;top:785px;width:2px;height:150px;background:#d6d6d6;"></div>
<div class="a" style="left:2294px;top:785px;width:2px;height:150px;background:#d6d6d6;"></div>
<svg class="a" style="left:1215px;top:799px;" width="22" height="22" viewBox="0 0 22 22"><rect x="1.1" y="1.1" width="18.6" height="18.6" fill="none" stroke="#333" stroke-width="2.2"/><path d="M 10.4 4.6 v 11.6 M 4.6 10.4 h 11.6" stroke="#333" stroke-width="1.6"/></svg>
<div class="t" style="top:799.14px;font-size:27px;line-height:27px;color:#3a3a3a;-webkit-text-stroke:0.35px #ffffff;left:1255px;">Diiodome...</div>
<div class="t" style="top:799.14px;font-size:27px;line-height:27px;color:#3a3a3a;-webkit-text-stroke:0.35px #ffffff;left:1430.6px;">G. Ström...</div>
<div class="t" style="top:799.14px;font-size:27px;line-height:27px;color:#3a3a3a;-webkit-text-stroke:0.35px #ffffff;right:2082.6px;">50.80</div>
<div class="t" style="top:799.14px;font-size:27px;line-height:27px;color:#3a3a3a;-webkit-text-stroke:0.35px #ffffff;right:1907.6px;">50.80</div>
<div class="t" style="top:799.14px;font-size:27px;line-height:27px;color:#3a3a3a;-webkit-text-stroke:0.35px #ffffff;right:1732.4px;">0.00</div>
<div class="t" style="top:799.14px;font-size:27px;line-height:27px;color:#3a3a3a;-webkit-text-stroke:0.35px #ffffff;left:2137.2px;">62.04 (±7....</div>
<div class="t" style="top:799.14px;font-size:27px;line-height:27px;color:#3a3a3a;-webkit-text-stroke:0.35px #ffffff;right:1379.6px;">61.67</div>
<svg class="a" style="left:1215px;top:849.2px;" width="22" height="22" viewBox="0 0 22 22"><rect x="1.1" y="1.1" width="18.6" height="18.6" fill="none" stroke="#333" stroke-width="2.2"/><path d="M 10.4 4.6 v 11.6 M 4.6 10.4 h 11.6" stroke="#333" stroke-width="1.6"/></svg>
<div class="t" style="top:849.34px;font-size:27px;line-height:27px;color:#3a3a3a;-webkit-text-stroke:0.35px #f7f7f7;left:1255px;">Ethylene...</div>
<div class="t" style="top:849.34px;font-size:27px;line-height:27px;color:#3a3a3a;-webkit-text-stroke:0.35px #f7f7f7;left:1430.6px;">K.F. Gebh...</div>
<div class="t" style="top:849.34px;font-size:27px;line-height:27px;color:#3a3a3a;-webkit-text-stroke:0.35px #f7f7f7;right:2082.6px;">47.70</div>
<div class="t" style="top:849.34px;font-size:27px;line-height:27px;color:#3a3a3a;-webkit-text-stroke:0.35px #f7f7f7;right:1907.6px;">26.40</div>
<div class="t" style="top:849.34px;font-size:27px;line-height:27px;color:#3a3a3a;-webkit-text-stroke:0.35px #f7f7f7;right:1732.4px;">21.30</div>
<div class="t" style="top:849.34px;font-size:27px;line-height:27px;color:#3a3a3a;-webkit-text-stroke:0.35px #f7f7f7;left:2137.2px;">57.27 (±8....</div>
<div class="t" style="top:849.34px;font-size:27px;line-height:27px;color:#3a3a3a;-webkit-text-stroke:0.35px #f7f7f7;right:1379.6px;">56.07</div>
<svg class="a" style="left:1215px;top:899.4px;" width="22" height="22" viewBox="0 0 22 22"><rect x="1.1" y="1.1" width="18.6" height="18.6" fill="none" stroke="#333" stroke-width="2.2"/><path d="M 10.4 4.6 v 11.6 M 4.6 10.4 h 11.6" stroke="#333" stroke-width="1.6"/></svg>
<div class="t" style="top:899.54px;font-size:27px;line-height:27px;color:#3a3a3a;-webkit-text-stroke:0.35px #ffffff;left:1255px;">Thiodiglyc...</div>
<div class="t" style="top:899.54px;font-size:27px;line-height:27px;color:#3a3a3a;-webkit-text-stroke:0.35px #ffffff;left:1430.6px;">P.-J. Sell,...</div>
<div class="t" style="top:899.54px;font-size:27px;line-height:27px;color:#3a3a3a;-webkit-text-stroke:0.35px #ffffff;right:2082.6px;">53.00</div>
<div class="t" style="top:899.54px;font-size:27px;line-height:27px;color:#3a3a3a;-webkit-text-stroke:0.35px #ffffff;right:1907.6px;">35.00</div>
<div class="t" style="top:899.54px;font-size:27px;line-height:27px;color:#3a3a3a;-webkit-text-stroke:0.35px #ffffff;right:1732.4px;">18.00</div>
<div class="t" style="top:899.54px;font-size:27px;line-height:27px;color:#3a3a3a;-webkit-text-stroke:0.35px #ffffff;left:2140px;">56.75 (±1...</div>
<div class="t" style="top:899.54px;font-size:27px;line-height:27px;color:#3a3a3a;-webkit-text-stroke:0.35px #ffffff;right:1379.6px;">58.29</div>
<div class="a" style="left:1206px;top:1976px;width:1266px;height:2px;background:#d6d6d6;"></div>
<svg class="a" style="left:2091px;top:1988px;" width="21" height="19" viewBox="0 0 21 19"><rect x="0" y="0" width="3" height="19" fill="#b5b5b5"/><polygon points="3,9.5 12.0,0 12.0,19" fill="#b5b5b5"/><polygon points="12.0,9.5 21,0 21,19" fill="#b5b5b5"/></svg>
<svg class="a" style="left:2129px;top:1988px;" width="19" height="19" viewBox="0 0 19 19"><polygon points="0,9.5 9.5,0 9.5,19" fill="#b5b5b5"/><polygon points="9.5,9.5 19,0 19,19" fill="#b5b5b5"/></svg>
<svg class="a" style="left:2172px;top:1988px;" width="10" height="19" viewBox="0 0 10 19"><polygon points="0,9.5 10,0 10,19" fill="#b5b5b5"/></svg>
<svg class="a" style="left:2372px;top:1988px;" width="9" height="19" viewBox="0 0 9 19"><polygon points="0,0 9,9.5 0,19" fill="#b5b5b5"/></svg>
<svg class="a" style="left:2405px;top:1988px;" width="19" height="19" viewBox="0 0 19 19"><polygon points="0,0 9.5,9.5 0,19" fill="#b5b5b5"/><polygon points="9.5,0 19,9.5 9.5,19" fill="#b5b5b5"/></svg>
<svg class="a" style="left:2441px;top:1988px;" width="22" height="19" viewBox="0 0 22 19"><polygon points="0,0 9.5,9.5 0,19" fill="#b5b5b5"/><polygon points="9.5,0 19,9.5 9.5,19" fill="#b5b5b5"/><rect x="19" y="0" width="3" height="19" fill="#b5b5b5"/></svg>
<div class="t" style="top:1986.79px;font-size:26px;line-height:26px;color:#3a3a3a;-webkit-text-stroke:0.35px #ffffff;left:2206px;transform:scaleX(0.9631);transform-origin:left 50%;">Result 0 of 3</div>
<div class="a" style="left:1204px;top:2040px;width:1270px;height:69px;background:#eeeeee;"></div>
<svg class="a" style="left:1218px;top:2065px;" width="26" height="20" viewBox="0 0 26 20"><path d="M 3 4 L 13 14 L 23 4" fill="none" stroke="#3c3c3c" stroke-width="5"/></svg>
<div class="t" style="top:2058.97px;font-size:35px;line-height:35px;color:#3c3c3c;-webkit-text-stroke:1.1px #eeeeee;left:1261.8px;transform:scaleX(0.8968);transform-origin:left 50%;">Notes</div>
<div class="a" style="left:2493px;top:513px;width:7px;height:1596px;background:#d6d6d6;"></div>
<div class="a" style="left:2520px;top:513px;width:1270px;height:67px;background:#eeeeee;"></div>
<svg class="a" style="left:2531px;top:529px;" width="35" height="35" viewBox="0 0 35 35"><circle cx="17.5" cy="17.5" r="17" fill="#109a26"/><path d="M 8 18 L 14.5 24 L 27 11" fill="none" stroke="#fff" stroke-width="4.5"/></svg>
<div class="t" style="top:533.27px;font-size:33px;line-height:33px;color:#3c3c3c;-webkit-text-stroke:1.0px #eeeeee;left:2578px;transform:scaleX(0.8994);transform-origin:left 50%;">SFE Result of Schwarz Block</div>
<div class="a" style="left:2520px;top:599px;width:1270px;height:225px;background:#bfecb1;border:2px solid #2a7d2a;box-sizing:border-box;"></div>
<div class="t" style="top:629.70px;font-size:28px;line-height:28px;color:#3a3a3a;-webkit-text-stroke:0.5px #bfecb1;font-weight:700;left:2541.6px;transform:scaleX(0.9408);transform-origin:left 50%;">Surface Free Energy:</div>
<div class="t" style="top:629.70px;font-size:28px;line-height:28px;color:#3a3a3a;-webkit-text-stroke:0.5px #bfecb1;font-weight:700;left:2842.7px;transform:scaleX(1.0473);transform-origin:left 50%;">32.46 mN/m</div>
<div class="t" style="top:671.90px;font-size:28px;line-height:28px;color:#3a3a3a;-webkit-text-stroke:0.35px #bfecb1;left:2541.6px;transform:scaleX(0.9715);transform-origin:left 50%;">Dispersive Part:</div>
<div class="t" style="top:671.90px;font-size:28px;line-height:28px;color:#3a3a3a;-webkit-text-stroke:0.35px #bfecb1;left:2842.7px;transform:scaleX(1.0295);transform-origin:left 50%;">27.61 mN/m</div>
<div class="t" style="top:714.80px;font-size:28px;line-height:28px;color:#3a3a3a;-webkit-text-stroke:0.35px #bfecb1;left:2541.6px;transform:scaleX(0.9601);transform-origin:left 50%;">Polar Part:</div>
<div class="t" style="top:714.80px;font-size:28px;line-height:28px;color:#3a3a3a;-webkit-text-stroke:0.35px #bfecb1;left:2842.7px;transform:scaleX(1.0370);transform-origin:left 50%;">4.85 mN/m</div>
<div class="t" style="top:772.60px;font-size:28px;line-height:28px;color:#3a3a3a;-webkit-text-stroke:0.35px #bfecb1;left:2541.6px;transform:scaleX(1.0201);transform-origin:left 50%;">Correlation Coefficient:</div>
<div class="t" style="top:772.60px;font-size:28px;line-height:28px;color:#3a3a3a;-webkit-text-stroke:0.35px #bfecb1;left:2842.7px;transform:scaleX(0.9682);transform-origin:left 50%;">0.99984</div>
<div class="a" style="left:2520px;top:844px;width:1270px;height:67px;background:#eeeeee;"></div>
<svg class="a" style="left:2534px;top:867px;" width="26" height="20" viewBox="0 0 26 20"><path d="M 2 15 L 12 5 L 22 15" fill="none" stroke="#3a3a3a" stroke-width="5"/></svg>
<div class="t" style="top:862.78px;font-size:37px;line-height:37px;color:#3c3c3c;-webkit-text-stroke:1.1px #eeeeee;left:2578px;transform:scaleX(0.9286);transform-origin:left 50%;">Surface Free Energy</div>
<svg class="a" style="left:3603px;top:858px;" width="36" height="37" viewBox="0 0 36 37">
      <rect x="9" y="2" width="18" height="12" fill="none" stroke="#636363" stroke-width="2.6"/>
      <path d="M 0 14 a 3 3 0 0 1 3 -3 h 30 a 3 3 0 0 1 3 3 v 13 a 3 3 0 0 1 -3 3 h -2 v -8 h -26 v 8 h -2 a 3 3 0 0 1 -3 -3 z" fill="#636363"/>
      <rect x="9" y="21" width="18" height="14" fill="none" stroke="#636363" stroke-width="2.6"/>
      <rect x="13" y="26" width="10" height="2" fill="#636363"/><rect x="13" y="30" width="10" height="2" fill="#636363"/>
    </svg>
<svg class="a" style="left:3659px;top:860px;" width="35" height="35" viewBox="0 0 35 35"><path d="M 14.38 4.93 L 14.63 0.24 L 20.37 0.24 L 20.62 4.93 L 24.18 6.41 L 27.67 3.26 L 31.74 7.33 L 28.59 10.82 L 30.07 14.38 L 34.76 14.63 L 34.76 20.37 L 30.07 20.62 L 28.59 24.18 L 31.74 27.67 L 27.67 31.74 L 24.18 28.59 L 20.62 30.07 L 20.37 34.76 L 14.63 34.76 L 14.38 30.07 L 10.82 28.59 L 7.33 31.74 L 3.26 27.67 L 6.41 24.18 L 4.93 20.62 L 0.24 20.37 L 0.24 14.63 L 4.93 14.38 L 6.41 10.82 L 3.26 7.33 L 7.33 3.26 L 10.82 6.41 Z" fill="#4b6f9a"/><circle cx="17.5" cy="17.5" r="12.94" fill="#4b6f9a"/><circle cx="17.5" cy="17.5" r="5.50" fill="#eeeeee"/></svg>
<div class="a" style="left:3716px;top:856px;width:2px;height:45px;background:#d0d0d0;"></div>
<svg class="a" style="left:3739px;top:860px;" width="35" height="34" viewBox="0 0 35 34"><path d="M 2.2 11 v -8.8 h 9.5 M 23.3 2.2 h 9.5 v 8.8 M 32.8 23 v 8.8 h -9.5 M 11.7 31.8 h -9.5 v -8.8" fill="none" stroke="#636363" stroke-width="4.3"/></svg>
<div class="a" style="left:2520px;top:930px;width:1270px;height:1005px;background:#ffffff;border:2px solid #b0b0b0;box-sizing:border-box;"></div>
<svg class="a" style="left:0px;top:0px;pointer-events:none;" width="3840" height="2157" viewBox="0 0 3840 2157"><rect x="2711.5" y="997.5" width="1001.5" height="41.6" fill="#f6f6f6"/><rect x="2711.5" y="1184.5" width="1001.5" height="145.4" fill="#f6f6f6"/><rect x="2711.5" y="1475.3" width="1001.5" height="145.4" fill="#f6f6f6"/><rect x="2711.5" y="1736.0" width="1001.5" height="2" fill="#e8e8e8"/><rect x="2704.5" y="1736.0" width="7" height="2" fill="#aaaaaa"/><rect x="2711.5" y="1706.9" width="1001.5" height="2" fill="#e8e8e8"/><rect x="2704.5" y="1706.9" width="7" height="2" fill="#aaaaaa"/><rect x="2711.5" y="1677.9" width="1001.5" height="2" fill="#e8e8e8"/><rect x="2704.5" y="1677.9" width="7" height="2" fill="#aaaaaa"/><rect x="2711.5" y="1648.8" width="1001.5" height="2" fill="#e8e8e8"/><rect x="2704.5" y="1648.8" width="7" height="2" fill="#aaaaaa"/><rect x="2711.5" y="1619.5" width="1001.5" height="2.4" fill="#cdcdcd"/><rect x="2698.5" y="1619.5" width="13" height="2.4" fill="#aaaaaa"/><rect x="2711.5" y="1590.6" width="1001.5" height="2" fill="#e8e8e8"/><rect x="2704.5" y="1590.6" width="7" height="2" fill="#aaaaaa"/><rect x="2711.5" y="1561.5" width="1001.5" height="2" fill="#e8e8e8"/><rect x="2704.5" y="1561.5" width="7" height="2" fill="#aaaaaa"/><rect x="2711.5" y="1532.5" width="1001.5" height="2" fill="#e8e8e8"/><rect x="2704.5" y="1532.5" width="7" height="2" fill="#aaaaaa"/><rect x="2711.5" y="1503.4" width="1001.5" height="2" fill="#e8e8e8"/><rect x="2704.5" y="1503.4" width="7" height="2" fill="#aaaaaa"/><rect x="2711.5" y="1474.1" width="1001.5" height="2.4" fill="#cdcdcd"/><rect x="2698.5" y="1474.1" width="13" height="2.4" fill="#aaaaaa"/><rect x="2711.5" y="1445.2" width="1001.5" height="2" fill="#e8e8e8"/><rect x="2704.5" y="1445.2" width="7" height="2" fill="#aaaaaa"/><rect x="2711.5" y="1416.1" width="1001.5" height="2" fill="#e8e8e8"/><rect x="2704.5" y="1416.1" width="7" height="2" fill="#aaaaaa"/><rect x="2711.5" y="1387.1" width="1001.5" height="2" fill="#e8e8e8"/><rect x="2704.5" y="1387.1" width="7" height="2" fill="#aaaaaa"/><rect x="2711.5" y="1358.0" width="1001.5" height="2" fill="#e8e8e8"/><rect x="2704.5" y="1358.0" width="7" height="2" fill="#aaaaaa"/><rect x="2711.5" y="1328.7" width="1001.5" height="2.4" fill="#cdcdcd"/><rect x="2698.5" y="1328.7" width="13" height="2.4" fill="#aaaaaa"/><rect x="2711.5" y="1299.8" width="1001.5" height="2" fill="#e8e8e8"/><rect x="2704.5" y="1299.8" width="7" height="2" fill="#aaaaaa"/><rect x="2711.5" y="1270.7" width="1001.5" height="2" fill="#e8e8e8"/><rect x="2704.5" y="1270.7" width="7" height="2" fill="#aaaaaa"/><rect x="2711.5" y="1241.7" width="1001.5" height="2" fill="#e8e8e8"/><rect x="2704.5" y="1241.7" width="7" height="2" fill="#aaaaaa"/><rect x="2711.5" y="1212.6" width="1001.5" height="2" fill="#e8e8e8"/><rect x="2704.5" y="1212.6" width="7" height="2" fill="#aaaaaa"/><rect x="2711.5" y="1183.3" width="1001.5" height="2.4" fill="#cdcdcd"/><rect x="2698.5" y="1183.3" width="13" height="2.4" fill="#aaaaaa"/><rect x="2711.5" y="1154.4" width="1001.5" height="2" fill="#e8e8e8"/><rect x="2704.5" y="1154.4" width="7" height="2" fill="#aaaaaa"/><rect x="2711.5" y="1125.3" width="1001.5" height="2" fill="#e8e8e8"/><rect x="2704.5" y="1125.3" width="7" height="2" fill="#aaaaaa"/><rect x="2711.5" y="1096.3" width="1001.5" height="2" fill="#e8e8e8"/><rect x="2704.5" y="1096.3" width="7" height="2" fill="#aaaaaa"/><rect x="2711.5" y="1067.2" width="1001.5" height="2" fill="#e8e8e8"/><rect x="2704.5" y="1067.2" width="7" height="2" fill="#aaaaaa"/><rect x="2711.5" y="1037.9" width="1001.5" height="2.4" fill="#cdcdcd"/><rect x="2698.5" y="1037.9" width="13" height="2.4" fill="#aaaaaa"/><rect x="2711.5" y="1009.0" width="1001.5" height="2" fill="#e8e8e8"/><rect x="2704.5" y="1009.0" width="7" height="2" fill="#aaaaaa"/><rect x="2715.2" y="1759.5" width="2" height="7" fill="#aaaaaa"/><rect x="2768.8" y="1759.5" width="2.4" height="14" fill="#aaaaaa"/><rect x="2822.8" y="1759.5" width="2" height="7" fill="#aaaaaa"/><rect x="2876.5" y="1759.5" width="2" height="7" fill="#aaaaaa"/><rect x="2930.3" y="1759.5" width="2" height="7" fill="#aaaaaa"/><rect x="2984.0" y="1759.5" width="2" height="7" fill="#aaaaaa"/><rect x="3037.6" y="1759.5" width="2.4" height="14" fill="#aaaaaa"/><rect x="3091.6" y="1759.5" width="2" height="7" fill="#aaaaaa"/><rect x="3145.3" y="1759.5" width="2" height="7" fill="#aaaaaa"/><rect x="3199.1" y="1759.5" width="2" height="7" fill="#aaaaaa"/><rect x="3252.8" y="1759.5" width="2" height="7" fill="#aaaaaa"/><rect x="3306.4" y="1759.5" width="2.4" height="14" fill="#aaaaaa"/><rect x="3360.4" y="1759.5" width="2" height="7" fill="#aaaaaa"/><rect x="3414.1" y="1759.5" width="2" height="7" fill="#aaaaaa"/><rect x="3467.9" y="1759.5" width="2" height="7" fill="#aaaaaa"/><rect x="3521.6" y="1759.5" width="2" height="7" fill="#aaaaaa"/><rect x="3575.2" y="1759.5" width="2.4" height="14" fill="#aaaaaa"/><rect x="3629.2" y="1759.5" width="2" height="7" fill="#aaaaaa"/><rect x="2710.0" y="996.0" width="1004.5" height="765.0" fill="none" stroke="#ababab" stroke-width="3"/><line x1="2768.7" y1="1697" x2="3652" y2="1061" stroke="#4a7ebb" stroke-width="5.5"/><circle cx="2768.7" cy="1697.7" r="12" fill="#4a7ebb"/><circle cx="3409.6" cy="1205.5" r="12" fill="#9bbb59"/><circle cx="3573" cy="1141" r="12" fill="#c0504d"/></svg>
<div class="t" style="top:1026.65px;font-size:29px;line-height:29px;color:#444;-webkit-text-stroke:0.35px #ffffff;right:1156px;">7.5</div>
<div class="t" style="top:1172.05px;font-size:29px;line-height:29px;color:#444;-webkit-text-stroke:0.35px #ffffff;right:1156px;">7</div>
<div class="t" style="top:1317.45px;font-size:29px;line-height:29px;color:#444;-webkit-text-stroke:0.35px #ffffff;right:1156px;">6.5</div>
<div class="t" style="top:1462.85px;font-size:29px;line-height:29px;color:#444;-webkit-text-stroke:0.35px #ffffff;right:1156px;">6</div>
<div class="t" style="top:1608.25px;font-size:29px;line-height:29px;color:#444;-webkit-text-stroke:0.35px #ffffff;right:1156px;">5.5</div>
<div class="t" style="top:1783.75px;font-size:29px;line-height:29px;color:#444;-webkit-text-stroke:0.35px #ffffff;left:2770px;transform:translateX(-50%);transform-origin:center 50%;">0</div>
<div class="t" style="top:1783.75px;font-size:29px;line-height:29px;color:#444;-webkit-text-stroke:0.35px #ffffff;left:3038.8px;transform:translateX(-50%);transform-origin:center 50%;">0.3</div>
<div class="t" style="top:1783.75px;font-size:29px;line-height:29px;color:#444;-webkit-text-stroke:0.35px #ffffff;left:3307.6px;transform:translateX(-50%);transform-origin:center 50%;">0.6</div>
<div class="t" style="top:1783.75px;font-size:29px;line-height:29px;color:#444;-webkit-text-stroke:0.35px #ffffff;left:3576.4px;transform:translateX(-50%);transform-origin:center 50%;">0.9</div>
<div class="t" style="top:1842.17px;font-size:35px;line-height:35px;color:#444;-webkit-text-stroke:0.35px #ffffff;left:3213px;transform:translateX(-50%) scaleX(1.0926);transform-origin:center 50%;">√(σl(p) / σl(d))</div>
<div class="t" style="left:2601px;top:1379px;font-size:37px;line-height:37px;color:#444;-webkit-text-stroke:0.4px #ffffff;transform:translate(-50%,-50%) rotate(-90deg) scaleX(1.03);">½ · (1 + cos Θ) · σl / √σl(d)</div>
<div class="a" style="left:2592px;top:1621px;width:357px;height:53px;background:#4a7ebb;border-radius:4px;"></div>
<div class="t" style="top:1634.75px;font-size:29px;line-height:29px;color:#ffffff;-webkit-text-stroke:0.35px #4a7ebb;left:2600px;transform:scaleX(0.9841);transform-origin:left 50%;">Diiodomethane (Θ=62.04°)</div>
<div class="a" style="left:3254px;top:1230px;width:315px;height:53px;background:#9bbb59;border-radius:4px;"></div>
<div class="t" style="top:1243.75px;font-size:29px;line-height:29px;color:#ffffff;-webkit-text-stroke:0.35px #9bbb59;left:3261.8px;transform:scaleX(0.9863);transform-origin:left 50%;">Thiodiglycol (Θ=56.75°)</div>
<div class="a" style="left:3398px;top:1064px;width:351px;height:53px;background:#c0504d;border-radius:4px;"></div>
<div class="t" style="top:1079.45px;font-size:29px;line-height:29px;color:#ffffff;-webkit-text-stroke:0.35px #c0504d;left:3406.5px;transform:scaleX(0.9651);transform-origin:left 50%;">Ethylene glycol (Θ=57.27°)</div>
<div class="a" style="left:2520px;top:1954px;width:1270px;height:67px;background:#eeeeee;"></div>
<svg class="a" style="left:2534px;top:1981px;" width="26" height="20" viewBox="0 0 26 20"><path d="M 2 3 L 12 13 L 22 3" fill="none" stroke="#3a3a3a" stroke-width="5"/></svg>
<div class="t" style="top:1972.48px;font-size:37px;line-height:37px;color:#3c3c3c;-webkit-text-stroke:1.1px #eeeeee;left:2578px;transform:scaleX(0.9677);transform-origin:left 50%;">Wetting Envelope</div>
<svg class="a" style="left:3603px;top:1968px;" width="36" height="37" viewBox="0 0 36 37">
      <rect x="9" y="2" width="18" height="12" fill="none" stroke="#c4c4c4" stroke-width="2.6"/>
      <path d="M 0 14 a 3 3 0 0 1 3 -3 h 30 a 3 3 0 0 1 3 3 v 13 a 3 3 0 0 1 -3 3 h -2 v -8 h -26 v 8 h -2 a 3 3 0 0 1 -3 -3 z" fill="#c4c4c4"/>
      <rect x="9" y="21" width="18" height="14" fill="none" stroke="#c4c4c4" stroke-width="2.6"/>
      <rect x="13" y="26" width="10" height="2" fill="#c4c4c4"/><rect x="13" y="30" width="10" height="2" fill="#c4c4c4"/>
    </svg>
<svg class="a" style="left:3659px;top:1970px;" width="35" height="35" viewBox="0 0 35 35"><path d="M 14.38 4.93 L 14.63 0.24 L 20.37 0.24 L 20.62 4.93 L 24.18 6.41 L 27.67 3.26 L 31.74 7.33 L 28.59 10.82 L 30.07 14.38 L 34.76 14.63 L 34.76 20.37 L 30.07 20.62 L 28.59 24.18 L 31.74 27.67 L 27.67 31.74 L 24.18 28.59 L 20.62 30.07 L 20.37 34.76 L 14.63 34.76 L 14.38 30.07 L 10.82 28.59 L 7.33 31.74 L 3.26 27.67 L 6.41 24.18 L 4.93 20.62 L 0.24 20.37 L 0.24 14.63 L 4.93 14.38 L 6.41 10.82 L 3.26 7.33 L 7.33 3.26 L 10.82 6.41 Z" fill="#b5c8dc"/><circle cx="17.5" cy="17.5" r="12.94" fill="#b5c8dc"/><circle cx="17.5" cy="17.5" r="5.50" fill="#eeeeee"/></svg>
<div class="a" style="left:3716px;top:1966px;width:2px;height:45px;background:#d0d0d0;"></div>
<svg class="a" style="left:3739px;top:1970px;" width="35" height="34" viewBox="0 0 35 34"><path d="M 2.2 11 v -8.8 h 9.5 M 23.3 2.2 h 9.5 v 8.8 M 32.8 23 v 8.8 h -9.5 M 11.7 31.8 h -9.5 v -8.8" fill="none" stroke="#c4c4c4" stroke-width="4.3"/></svg>
<div class="a" style="left:2520px;top:2041px;width:1270px;height:68px;background:#eeeeee;"></div>
<svg class="a" style="left:2534px;top:2067px;" width="26" height="20" viewBox="0 0 26 20"><path d="M 2 3 L 12 13 L 22 3" fill="none" stroke="#b5b5b5" stroke-width="5"/></svg>
<div class="t" style="top:2058.67px;font-size:35px;line-height:35px;color:#a8a8a8;-webkit-text-stroke:1.0px #eeeeee;left:2578px;transform:scaleX(0.8855);transform-origin:left 50%;">Available Analysis Methods</div>
<svg class="a" style="left:1600px;top:1760px;" width="40" height="50" viewBox="0 0 40 50"><path d="M 7.5 8.2 L 7.5 41.4 L 15.4 33.9 L 20.4 45.5 L 24.8 43 L 20.6 32.5 L 31.7 32.2 Z" fill="#fff" stroke="#000" stroke-width="1.4" stroke-linejoin="round"/></svg>
</body></html>
